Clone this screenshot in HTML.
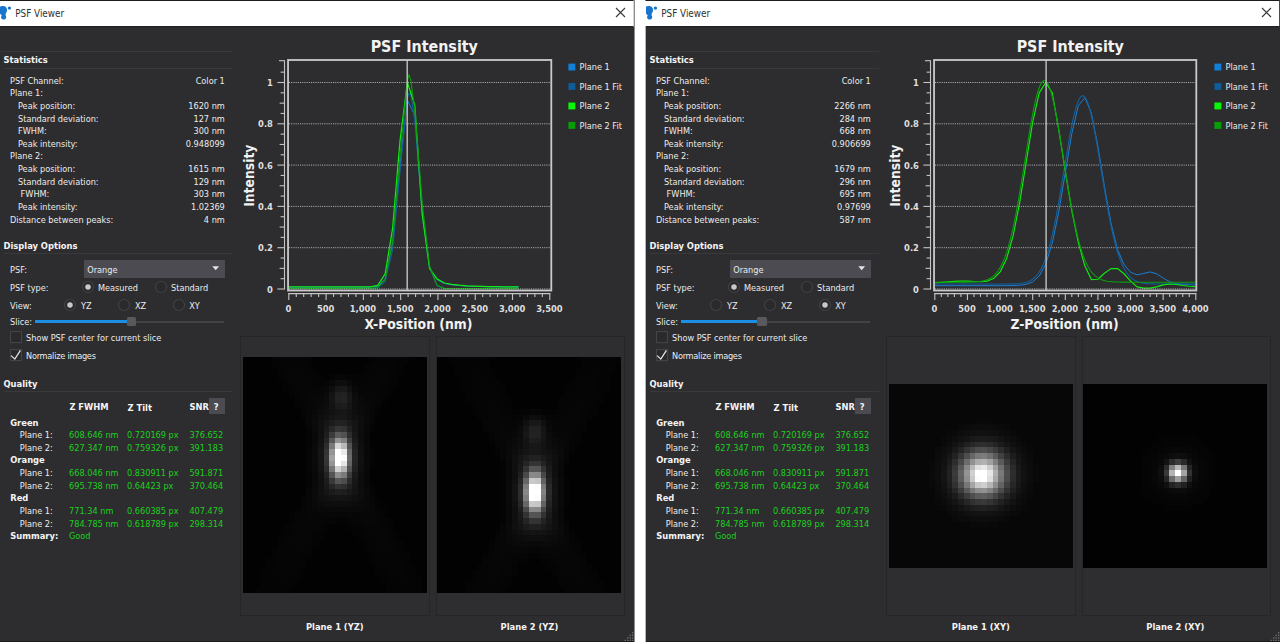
<!DOCTYPE html>
<html lang="en"><head><meta charset="utf-8"><title>PSF Viewer</title>
<style>
html,body{margin:0;padding:0}
body{width:1280px;height:642px;overflow:hidden;background:#fff;position:relative;font-family:"DejaVu Sans Condensed","Liberation Sans",sans-serif}
.win{position:absolute;top:0;height:642px;background:#2d2d30;overflow:hidden}
.win:after{content:'';position:absolute;left:0;right:0;bottom:0;height:1px;background:#1b1b1c}
.tb:after{content:'';position:absolute;left:0;right:-1px;top:26px;height:1px;background:#29292b}
.tb{position:absolute;left:0;right:0;top:0;height:26px;background:#fff;border-top:1px solid #1c1c1c;border-bottom:1px solid #222224;border-right:1px solid #7a7a7a;box-sizing:content-box;height:25px}
.title{position:absolute;left:15.2px;top:7px;font-family:"DejaVu Sans Condensed","Liberation Sans",sans-serif;font-size:9.85px;line-height:12px;color:#303030;white-space:pre}
.close{position:absolute;left:615.3px;top:6.2px}
.t{position:absolute;font-size:9.1px;line-height:12px;color:#ececec;white-space:pre}
.t.b{font-weight:700;font-size:9.3px;color:#f4f4f4}
.t.g{color:#1cd01c}
.t.c{text-align:center}
.sep{position:absolute;height:1px;background:#39393c}
.combo{position:absolute;background:#4b4b51}
.qbtn{position:absolute;background:#4b4b51}
.radio{position:absolute}
.chk{position:absolute}
.track{position:absolute;height:1.6px;background:#434346}
.fill{position:absolute;height:3px;background:#1c8fe4}
.thumb{position:absolute;width:9.3px;height:9.2px;background:#58585d;border-radius:1.5px}
.chart{position:absolute;overflow:hidden}
.panel{position:absolute;box-sizing:content-box;border:1px solid #262628;background:#2e2e31}
.psf{position:absolute}
.strip{position:absolute;top:0;width:1px;height:642px}
.wr .tb{border-right-color:#4a4a4a}
.wl .tb{border-right-color:#d4d4d4}
.grip{position:absolute;left:624px;top:631.5px}
</style></head>
<body>
<div class="strip" style="left:634px;background:#8c8c8d"></div><div class="strip" style="left:645px;background:linear-gradient(#777 0,#777 1px,#fff 1px,#fff 26px,#b4b4b5 26px)"></div>
<div class="win wl" style="left:0px;width:634px">
<div class="tb"><svg width="13" height="16" viewBox="0 0 13 16" style="position:absolute;left:0;top:4.9px"><path d="M0 0.6C1.5 -0.2 4.4 -0.3 5.8 1C7.3 2.4 7.4 5 6.2 6.8C5.7 7.5 5.4 8.4 5.6 9.2C6.6 10.4 6.3 12.4 4.9 13.2C3.5 13.9 1.7 13.4 1.2 12C0.9 11.1 1.2 10.2 1.7 9.5C1.4 8.7 0.7 8.1 0 7.8Z" fill="#1874cd"/><circle cx="9.4" cy="2.1" r="1.7" fill="#1874cd"/></svg><span class="title">PSF Viewer</span><svg class="close" width="11" height="11" viewBox="0 0 11 11"><path d="M1 1L10 10M10 1L1 10" stroke="#3a3a3a" stroke-width="1.1" fill="none"/></svg></div>
<div class="sep" style="left:1px;top:51px;width:232px"></div>
<span class="t b" style="left:3.5px;top:54px">Statistics</span>
<div class="sep" style="left:3.5px;top:67.5px;width:229px"></div>
<span class="t " style="left:10px;top:75px">PSF Channel:</span>
<span class="t " style="right:409.2px;top:75px">Color 1</span>
<span class="t " style="left:10px;top:87px">Plane 1:</span>
<span class="t " style="left:18px;top:100px">Peak position:</span>
<span class="t " style="right:409.2px;top:100px">1620 nm</span>
<span class="t " style="left:18px;top:113px">Standard deviation:</span>
<span class="t " style="right:409.2px;top:113px">127 nm</span>
<span class="t " style="left:18px;top:125px">FWHM:</span>
<span class="t " style="right:409.2px;top:125px">300 nm</span>
<span class="t " style="left:18px;top:138px">Peak intensity:</span>
<span class="t " style="right:409.2px;top:138px">0.948099</span>
<span class="t " style="left:10px;top:150px">Plane 2:</span>
<span class="t " style="left:18px;top:163px">Peak position:</span>
<span class="t " style="right:409.2px;top:163px">1615 nm</span>
<span class="t " style="left:18px;top:176px">Standard deviation:</span>
<span class="t " style="right:409.2px;top:176px">129 nm</span>
<span class="t " style="left:20.6px;top:188px">FWHM:</span>
<span class="t " style="right:409.2px;top:188px">303 nm</span>
<span class="t " style="left:18px;top:201px">Peak intensity:</span>
<span class="t " style="right:409.2px;top:201px">1.02369</span>
<span class="t " style="left:10px;top:214px">Distance between peaks:</span>
<span class="t " style="right:409.2px;top:214px">4 nm</span>
<span class="t b" style="left:3.5px;top:240px">Display Options</span>
<div class="sep" style="left:3.5px;top:252.6px;width:229px"></div>
<span class="t " style="left:10px;top:264px">PSF:</span>
<div class="combo" style="left:83.5px;top:259.5px;width:141px;height:18px"><svg width="8" height="5" viewBox="0 0 8 5" style="position:absolute;left:128.6px;top:6.8px"><path d="M0.3 0.3H7.1L3.7 4.2Z" fill="#e4e4e4"/></svg></div>
<span class="t " style="left:87.3px;top:264px">Orange</span>
<span class="t " style="left:10px;top:282px">PSF type:</span>
<svg class="radio" width="14" height="14" viewBox="0 0 14 14" style="left:81px;top:280.3px"><circle cx="7" cy="7" r="5.5" fill="#2a2a2c" stroke="#414145" stroke-width="1.2"/><circle cx="7" cy="7" r="2.75" fill="#c8c8c8"/></svg>
<span class="t " style="left:98px;top:282px">Measured</span>
<svg class="radio" width="14" height="14" viewBox="0 0 14 14" style="left:153.5px;top:280.3px"><circle cx="7" cy="7" r="5.5" fill="#2a2a2c" stroke="#414145" stroke-width="1.2"/></svg>
<span class="t " style="left:171px;top:282px">Standard</span>
<span class="t " style="left:10px;top:300px">View:</span>
<svg class="radio" width="14" height="14" viewBox="0 0 14 14" style="left:63.3px;top:297.9px"><circle cx="7" cy="7" r="5.5" fill="#2a2a2c" stroke="#414145" stroke-width="1.2"/><circle cx="7" cy="7" r="2.75" fill="#c8c8c8"/></svg>
<span class="t " style="left:80.9px;top:300px">YZ</span>
<svg class="radio" width="14" height="14" viewBox="0 0 14 14" style="left:117.4px;top:297.9px"><circle cx="7" cy="7" r="5.5" fill="#2a2a2c" stroke="#414145" stroke-width="1.2"/></svg>
<span class="t " style="left:135px;top:300px">XZ</span>
<svg class="radio" width="14" height="14" viewBox="0 0 14 14" style="left:171.6px;top:297.9px"><circle cx="7" cy="7" r="5.5" fill="#2a2a2c" stroke="#414145" stroke-width="1.2"/></svg>
<span class="t " style="left:189.2px;top:300px">XY</span>
<span class="t " style="left:10px;top:316px">Slice:</span>
<div class="track" style="left:35px;top:321px;width:189px"></div>
<div class="fill" style="left:35px;top:320px;width:92px"></div>
<div class="thumb" style="left:127px;top:317px"></div>
<svg class="chk" width="14" height="14" viewBox="0 0 14 14" style="left:9.25px;top:330.4px"><rect x="1.5" y="1.6" width="11" height="11" fill="#2a2a2c" stroke="#444448" stroke-width="1.1"/></svg>
<span class="t " style="left:26px;top:332px">Show PSF center for current slice</span>
<svg class="chk" width="14" height="14" viewBox="0 0 14 14" style="left:9.25px;top:348.3px"><rect x="1.5" y="1.6" width="11" height="11" fill="#2a2a2c" stroke="#444448" stroke-width="1.1"/><path d="M2.1 7.6L5.8 11.1L11.4 2.4" fill="none" stroke="#e2e2e2" stroke-width="1.3"/></svg>
<span class="t " style="left:26px;top:350px;letter-spacing:-0.24px">Normalize images</span>
<span class="t b" style="left:3.5px;top:378px">Quality</span>
<div class="sep" style="left:3.5px;top:391px;width:229px"></div>
<span class="t b" style="left:69.4px;top:401px">Z FWHM</span>
<span class="t b" style="left:127.5px;top:402px">Z Tilt</span>
<span class="t b" style="left:189.4px;top:401px">SNR</span>
<div class="qbtn" style="left:208.5px;top:398px;width:16px;height:16px"></div>
<span class="t b" style="left:213.8px;top:401px">?</span>
<span class="t b" style="left:10.25px;top:417px">Green</span>
<span class="t " style="left:19.75px;top:429px">Plane 1:</span>
<span class="t g" style="left:69px;top:429px">608.646 nm</span>
<span class="t g" style="left:127px;top:429px">0.720169 px</span>
<span class="t g" style="left:189.4px;top:429px">376.652</span>
<span class="t " style="left:19.75px;top:442px">Plane 2:</span>
<span class="t g" style="left:69px;top:442px">627.347 nm</span>
<span class="t g" style="left:127px;top:442px">0.759326 px</span>
<span class="t g" style="left:189.4px;top:442px">391.183</span>
<span class="t b" style="left:10.25px;top:454px">Orange</span>
<span class="t " style="left:19.75px;top:467px">Plane 1:</span>
<span class="t g" style="left:69px;top:467px">668.046 nm</span>
<span class="t g" style="left:127px;top:467px">0.830911 px</span>
<span class="t g" style="left:189.4px;top:467px">591.871</span>
<span class="t " style="left:19.75px;top:480px">Plane 2:</span>
<span class="t g" style="left:69px;top:480px">695.738 nm</span>
<span class="t g" style="left:127px;top:480px">0.64423 px</span>
<span class="t g" style="left:189.4px;top:480px">370.464</span>
<span class="t b" style="left:10.25px;top:492px">Red</span>
<span class="t " style="left:19.75px;top:505px">Plane 1:</span>
<span class="t g" style="left:69px;top:505px">771.34 nm</span>
<span class="t g" style="left:127px;top:505px">0.660385 px</span>
<span class="t g" style="left:189.4px;top:505px">407.479</span>
<span class="t " style="left:19.75px;top:518px">Plane 2:</span>
<span class="t g" style="left:69px;top:518px">784.785 nm</span>
<span class="t g" style="left:127px;top:518px">0.618789 px</span>
<span class="t g" style="left:189.4px;top:518px">298.314</span>
<span class="t b" style="left:10.25px;top:530px">Summary:</span>
<span class="t g" style="left:69px;top:530px">Good</span>
<svg class="chart" width="400" height="312" viewBox="234 24 400 312" style="left:234px;top:24px">
<g font-family="'DejaVu Sans Condensed','Liberation Sans',sans-serif" font-weight="700" fill="#f2f2f2">
<text x="424.3" y="51.5" font-size="15.9" text-anchor="middle">PSF Intensity</text>
<text x="418.5" y="328.5" font-size="13.8" text-anchor="middle">X-Position (nm)</text>
<text transform="translate(253.6 175.7) rotate(-90)" font-size="13.8" text-anchor="middle">Intensity</text>
</g>
<g stroke="#c8c8c8" stroke-width="1" stroke-dasharray="1.1 1.1" opacity="0.85">
<line x1="289" y1="247.7" x2="550.3" y2="247.7"/>
<line x1="289" y1="206.4" x2="550.3" y2="206.4"/>
<line x1="289" y1="165.1" x2="550.3" y2="165.1"/>
<line x1="289" y1="123.8" x2="550.3" y2="123.8"/>
<line x1="289" y1="82.5" x2="550.3" y2="82.5"/>
</g>
<clipPath id="c3500"><rect x="289" y="61" width="261.3" height="228.3"/></clipPath>
<g clip-path="url(#c3500)" fill="none" stroke-linejoin="round">
<polyline points="288.8,287.14 296.21,287.14 303.62,287.14 311.04,287.14 318.45,287.14 325.86,287.14 333.27,287.14 340.69,287.14 348.1,287.14 355.51,287.14 362.92,287.14 370.34,287.09 377.75,286.25 385.16,278.72 392.57,243.77 399.99,164.96 407.4,100.05 414.81,115.54 422.22,213.88 429.64,268.65 437.05,279.59 444.46,283.54 451.87,284.81 459.29,285.55 466.7,286.06 474.11,286.4 481.52,286.64 488.93,286.8 496.35,286.91 503.76,286.98 511.17,287.03 518.58,287.07" stroke="#1c7fd2" stroke-width="1.0"/>
<polyline points="288.8,288.59 296.21,288.59 303.62,288.59 311.04,288.59 318.45,288.59 325.86,288.59 333.27,288.59 340.69,288.59 348.1,288.59 355.51,288.59 362.92,288.59 370.34,288.55 377.75,287.9 385.16,281.59 392.57,249.74 399.99,171.72 407.4,98.07 408.89,93.38 410.75,94.26 414.81,120.27 422.22,207.99 429.64,267.67 437.05,285.65 444.46,288.36 451.87,288.58 459.29,288.59 466.7,288.59 474.11,288.59 481.52,288.59 488.93,288.59 496.35,288.59 503.76,288.59 511.17,288.59 518.58,288.59" stroke="#155f98" stroke-width="1.1"/>
<polyline points="288.8,286.96 296.21,286.96 303.62,286.96 311.04,286.96 318.45,286.96 325.86,286.96 333.27,286.96 340.69,286.96 348.1,286.96 355.51,286.96 362.92,286.95 370.34,286.84 377.75,285.31 385.16,273.89 392.57,228.7 399.99,140.88 407.4,82.5 414.81,105.22 422.22,214.18 429.64,268.72 437.05,278.89 444.46,283 451.87,284.39 459.29,285.21 466.7,285.76 474.11,286.14 481.52,286.4 488.93,286.58 496.35,286.7 503.76,286.78 511.17,286.84 518.58,286.87" stroke="#10ea10" stroke-width="1.25"/>
<polyline points="288.8,288.59 296.21,288.59 303.62,288.59 311.04,288.59 318.45,288.59 325.86,288.59 333.27,288.59 340.69,288.59 348.1,288.59 355.51,288.59 362.92,288.59 370.34,288.53 377.75,287.59 385.16,279.35 392.57,241.4 399.99,155.4 407.4,81 408.89,74.65 410.75,79.82 414.81,109.9 422.22,203.65 429.64,266.29 437.05,285.35 444.46,288.33 451.87,288.58 459.29,288.59 466.7,288.59 474.11,288.59 481.52,288.59 488.93,288.59 496.35,288.59 503.76,288.59 511.17,288.59 518.58,288.59" stroke="#0c9c0c" stroke-width="1.1"/>
</g>
<line x1="407.2" y1="60" x2="407.2" y2="290" stroke="#c4c4c4" stroke-width="1.4"/>
<line x1="289" y1="288.9" x2="550.3" y2="288.9" stroke="#c8c8c8" stroke-width="1" stroke-dasharray="1.1 1.1" opacity="0.8"/>
<rect x="288.05" y="60" width="263.25" height="230.5" fill="none" stroke="#cacaca" stroke-width="1.8"/>
<g stroke="#c4c4c4" stroke-width="1.1">
<line x1="284.5" y1="60.3" x2="284.5" y2="289.5"/>
<line x1="279" y1="60.7" x2="284.5" y2="60.7"/>
<line x1="277.4" y1="289" x2="284.5" y2="289"/>
<line x1="280.6" y1="278.68" x2="284.5" y2="278.68"/>
<line x1="279.6" y1="268.35" x2="284.5" y2="268.35"/>
<line x1="280.6" y1="258.02" x2="284.5" y2="258.02"/>
<line x1="277.4" y1="247.7" x2="284.5" y2="247.7"/>
<line x1="280.6" y1="237.38" x2="284.5" y2="237.38"/>
<line x1="279.6" y1="227.05" x2="284.5" y2="227.05"/>
<line x1="280.6" y1="216.72" x2="284.5" y2="216.72"/>
<line x1="277.4" y1="206.4" x2="284.5" y2="206.4"/>
<line x1="280.6" y1="196.07" x2="284.5" y2="196.07"/>
<line x1="279.6" y1="185.75" x2="284.5" y2="185.75"/>
<line x1="280.6" y1="175.43" x2="284.5" y2="175.43"/>
<line x1="277.4" y1="165.1" x2="284.5" y2="165.1"/>
<line x1="280.6" y1="154.78" x2="284.5" y2="154.78"/>
<line x1="279.6" y1="144.45" x2="284.5" y2="144.45"/>
<line x1="280.6" y1="134.12" x2="284.5" y2="134.12"/>
<line x1="277.4" y1="123.8" x2="284.5" y2="123.8"/>
<line x1="280.6" y1="113.47" x2="284.5" y2="113.47"/>
<line x1="279.6" y1="103.15" x2="284.5" y2="103.15"/>
<line x1="280.6" y1="92.82" x2="284.5" y2="92.82"/>
<line x1="277.4" y1="82.5" x2="284.5" y2="82.5"/>
<line x1="280.6" y1="72.17" x2="284.5" y2="72.17"/>
<line x1="288.2" y1="293.6" x2="550.4" y2="293.6"/>
<line x1="288.8" y1="293.2" x2="288.8" y2="300"/>
<line x1="296.26" y1="293.2" x2="296.26" y2="296.9"/>
<line x1="303.71" y1="293.2" x2="303.71" y2="296.9"/>
<line x1="311.17" y1="293.2" x2="311.17" y2="296.9"/>
<line x1="318.63" y1="293.2" x2="318.63" y2="296.9"/>
<line x1="326.09" y1="293.2" x2="326.09" y2="300"/>
<line x1="333.54" y1="293.2" x2="333.54" y2="296.9"/>
<line x1="341" y1="293.2" x2="341" y2="296.9"/>
<line x1="348.46" y1="293.2" x2="348.46" y2="296.9"/>
<line x1="355.91" y1="293.2" x2="355.91" y2="296.9"/>
<line x1="363.37" y1="293.2" x2="363.37" y2="300"/>
<line x1="370.83" y1="293.2" x2="370.83" y2="296.9"/>
<line x1="378.29" y1="293.2" x2="378.29" y2="296.9"/>
<line x1="385.74" y1="293.2" x2="385.74" y2="296.9"/>
<line x1="393.2" y1="293.2" x2="393.2" y2="296.9"/>
<line x1="400.66" y1="293.2" x2="400.66" y2="300"/>
<line x1="408.11" y1="293.2" x2="408.11" y2="296.9"/>
<line x1="415.57" y1="293.2" x2="415.57" y2="296.9"/>
<line x1="423.03" y1="293.2" x2="423.03" y2="296.9"/>
<line x1="430.49" y1="293.2" x2="430.49" y2="296.9"/>
<line x1="437.94" y1="293.2" x2="437.94" y2="300"/>
<line x1="445.4" y1="293.2" x2="445.4" y2="296.9"/>
<line x1="452.86" y1="293.2" x2="452.86" y2="296.9"/>
<line x1="460.31" y1="293.2" x2="460.31" y2="296.9"/>
<line x1="467.77" y1="293.2" x2="467.77" y2="296.9"/>
<line x1="475.23" y1="293.2" x2="475.23" y2="300"/>
<line x1="482.69" y1="293.2" x2="482.69" y2="296.9"/>
<line x1="490.14" y1="293.2" x2="490.14" y2="296.9"/>
<line x1="497.6" y1="293.2" x2="497.6" y2="296.9"/>
<line x1="505.06" y1="293.2" x2="505.06" y2="296.9"/>
<line x1="512.51" y1="293.2" x2="512.51" y2="300"/>
<line x1="519.97" y1="293.2" x2="519.97" y2="296.9"/>
<line x1="527.43" y1="293.2" x2="527.43" y2="296.9"/>
<line x1="534.89" y1="293.2" x2="534.89" y2="296.9"/>
<line x1="542.34" y1="293.2" x2="542.34" y2="296.9"/>
<line x1="549.8" y1="293.2" x2="549.8" y2="300"/>
</g>
<g font-family="'DejaVu Sans Condensed','Liberation Sans',sans-serif" font-weight="700" font-size="9.3" fill="#dedede">
<text x="272.9" y="292.5" text-anchor="end">0</text>
<text x="272.9" y="251.2" text-anchor="end">0.2</text>
<text x="272.9" y="209.9" text-anchor="end">0.4</text>
<text x="272.9" y="168.6" text-anchor="end">0.6</text>
<text x="272.9" y="127.3" text-anchor="end">0.8</text>
<text x="272.9" y="86" text-anchor="end">1</text>
<text x="288.4" y="312.3" text-anchor="middle">0</text>
<text x="325.69" y="312.3" text-anchor="middle">500</text>
<text x="362.97" y="312.3" text-anchor="middle">1,000</text>
<text x="400.26" y="312.3" text-anchor="middle">1,500</text>
<text x="437.54" y="312.3" text-anchor="middle">2,000</text>
<text x="474.83" y="312.3" text-anchor="middle">2,500</text>
<text x="512.11" y="312.3" text-anchor="middle">3,000</text>
<text x="549.4" y="312.3" text-anchor="middle">3,500</text>
</g>
<g font-family="'DejaVu Sans Condensed','Liberation Sans',sans-serif" font-size="9.1" fill="#ececec">
<rect x="568.4" y="63.6" width="6.9" height="6.9" fill="#1080d8"/><text x="579.5" y="70.3">Plane 1</text>
<rect x="568.4" y="83.05" width="6.9" height="6.9" fill="#0e5c98"/><text x="579.5" y="89.75">Plane 1 Fit</text>
<rect x="568.4" y="102.5" width="6.9" height="6.9" fill="#06f806"/><text x="579.5" y="109.2">Plane 2</text>
<rect x="568.4" y="121.95" width="6.9" height="6.9" fill="#06a006"/><text x="579.5" y="128.65">Plane 2 Fit</text>
</g>
</svg>
<div class="panel" style="left:240.3px;top:336.3px;width:188.2px;height:277.7px"></div>
<div class="panel" style="left:435.6px;top:336.3px;width:187px;height:277.7px"></div>
<svg class="psf" width="184" height="235.75" viewBox="0 0 32 41" preserveAspectRatio="none" shape-rendering="crispEdges" style="left:243px;top:357.1px"><rect width="32" height="41" fill="#020202"/><rect x="5" y="0" width="1" height="1" fill="#040404"/><rect x="6" y="0" width="5" height="1" fill="#050505"/><rect x="11" y="0" width="1" height="1" fill="#040404"/><rect x="22" y="0" width="1" height="1" fill="#040404"/><rect x="23" y="0" width="4" height="1" fill="#050505"/><rect x="27" y="0" width="2" height="1" fill="#040404"/><rect x="5" y="1" width="2" height="1" fill="#040404"/><rect x="7" y="1" width="4" height="1" fill="#050505"/><rect x="11" y="1" width="1" height="1" fill="#040404"/><rect x="21" y="1" width="1" height="1" fill="#040404"/><rect x="22" y="1" width="5" height="1" fill="#050505"/><rect x="27" y="1" width="1" height="1" fill="#040404"/><rect x="6" y="2" width="1" height="1" fill="#040404"/><rect x="7" y="2" width="2" height="1" fill="#050505"/><rect x="9" y="2" width="1" height="1" fill="#060606"/><rect x="10" y="2" width="2" height="1" fill="#050505"/><rect x="12" y="2" width="1" height="1" fill="#040404"/><rect x="21" y="2" width="1" height="1" fill="#040404"/><rect x="22" y="2" width="2" height="1" fill="#050505"/><rect x="24" y="2" width="1" height="1" fill="#060606"/><rect x="25" y="2" width="2" height="1" fill="#050505"/><rect x="27" y="2" width="1" height="1" fill="#040404"/><rect x="6" y="3" width="1" height="1" fill="#040404"/><rect x="7" y="3" width="2" height="1" fill="#050505"/><rect x="9" y="3" width="2" height="1" fill="#060606"/><rect x="11" y="3" width="1" height="1" fill="#050505"/><rect x="12" y="3" width="2" height="1" fill="#040404"/><rect x="15" y="3" width="1" height="1" fill="#040404"/><rect x="16" y="3" width="2" height="1" fill="#060606"/><rect x="18" y="3" width="1" height="1" fill="#050505"/><rect x="19" y="3" width="2" height="1" fill="#040404"/><rect x="21" y="3" width="2" height="1" fill="#050505"/><rect x="23" y="3" width="2" height="1" fill="#060606"/><rect x="25" y="3" width="1" height="1" fill="#050505"/><rect x="26" y="3" width="1" height="1" fill="#040404"/><rect x="7" y="4" width="1" height="1" fill="#040404"/><rect x="8" y="4" width="1" height="1" fill="#050505"/><rect x="9" y="4" width="3" height="1" fill="#060606"/><rect x="12" y="4" width="1" height="1" fill="#050505"/><rect x="13" y="4" width="1" height="1" fill="#040404"/><rect x="14" y="4" width="1" height="1" fill="#050505"/><rect x="15" y="4" width="1" height="1" fill="#080808"/><rect x="16" y="4" width="1" height="1" fill="#0d0d0d"/><rect x="17" y="4" width="1" height="1" fill="#0e0e0e"/><rect x="18" y="4" width="1" height="1" fill="#0a0a0a"/><rect x="19" y="4" width="1" height="1" fill="#060606"/><rect x="20" y="4" width="2" height="1" fill="#050505"/><rect x="22" y="4" width="3" height="1" fill="#060606"/><rect x="25" y="4" width="1" height="1" fill="#050505"/><rect x="26" y="4" width="1" height="1" fill="#040404"/><rect x="7" y="5" width="1" height="1" fill="#040404"/><rect x="8" y="5" width="1" height="1" fill="#050505"/><rect x="9" y="5" width="5" height="1" fill="#060606"/><rect x="14" y="5" width="1" height="1" fill="#070707"/><rect x="15" y="5" width="1" height="1" fill="#0e0e0e"/><rect x="16" y="5" width="1" height="1" fill="#181818"/><rect x="17" y="5" width="1" height="1" fill="#191919"/><rect x="18" y="5" width="1" height="1" fill="#111111"/><rect x="19" y="5" width="1" height="1" fill="#090909"/><rect x="20" y="5" width="4" height="1" fill="#060606"/><rect x="24" y="5" width="1" height="1" fill="#050505"/><rect x="25" y="5" width="1" height="1" fill="#040404"/><rect x="8" y="6" width="1" height="1" fill="#040404"/><rect x="9" y="6" width="1" height="1" fill="#050505"/><rect x="10" y="6" width="1" height="1" fill="#060606"/><rect x="11" y="6" width="3" height="1" fill="#070707"/><rect x="14" y="6" width="1" height="1" fill="#0a0a0a"/><rect x="15" y="6" width="1" height="1" fill="#141414"/><rect x="16" y="6" width="1" height="1" fill="#202020"/><rect x="17" y="6" width="1" height="1" fill="#222222"/><rect x="18" y="6" width="1" height="1" fill="#171717"/><rect x="19" y="6" width="1" height="1" fill="#0b0b0b"/><rect x="20" y="6" width="3" height="1" fill="#070707"/><rect x="23" y="6" width="1" height="1" fill="#060606"/><rect x="24" y="6" width="1" height="1" fill="#050505"/><rect x="25" y="6" width="1" height="1" fill="#040404"/><rect x="9" y="7" width="1" height="1" fill="#050505"/><rect x="10" y="7" width="1" height="1" fill="#060606"/><rect x="11" y="7" width="1" height="1" fill="#070707"/><rect x="12" y="7" width="2" height="1" fill="#080808"/><rect x="14" y="7" width="1" height="1" fill="#0b0b0b"/><rect x="15" y="7" width="1" height="1" fill="#151515"/><rect x="16" y="7" width="1" height="1" fill="#212121"/><rect x="17" y="7" width="1" height="1" fill="#232323"/><rect x="18" y="7" width="1" height="1" fill="#181818"/><rect x="19" y="7" width="1" height="1" fill="#0d0d0d"/><rect x="20" y="7" width="1" height="1" fill="#090909"/><rect x="21" y="7" width="2" height="1" fill="#070707"/><rect x="23" y="7" width="1" height="1" fill="#060606"/><rect x="24" y="7" width="1" height="1" fill="#040404"/><rect x="9" y="8" width="1" height="1" fill="#040404"/><rect x="10" y="8" width="1" height="1" fill="#060606"/><rect x="11" y="8" width="1" height="1" fill="#070707"/><rect x="12" y="8" width="1" height="1" fill="#080808"/><rect x="13" y="8" width="1" height="1" fill="#0a0a0a"/><rect x="14" y="8" width="1" height="1" fill="#0c0c0c"/><rect x="15" y="8" width="1" height="1" fill="#131313"/><rect x="16" y="8" width="1" height="1" fill="#1b1b1b"/><rect x="17" y="8" width="1" height="1" fill="#1d1d1d"/><rect x="18" y="8" width="1" height="1" fill="#151515"/><rect x="19" y="8" width="1" height="1" fill="#0d0d0d"/><rect x="20" y="8" width="1" height="1" fill="#0a0a0a"/><rect x="21" y="8" width="1" height="1" fill="#080808"/><rect x="22" y="8" width="1" height="1" fill="#070707"/><rect x="23" y="8" width="1" height="1" fill="#050505"/><rect x="10" y="9" width="1" height="1" fill="#050505"/><rect x="11" y="9" width="1" height="1" fill="#070707"/><rect x="12" y="9" width="1" height="1" fill="#090909"/><rect x="13" y="9" width="1" height="1" fill="#0c0c0c"/><rect x="14" y="9" width="1" height="1" fill="#0e0e0e"/><rect x="15" y="9" width="1" height="1" fill="#121212"/><rect x="16" y="9" width="1" height="1" fill="#161616"/><rect x="17" y="9" width="1" height="1" fill="#171717"/><rect x="18" y="9" width="1" height="1" fill="#131313"/><rect x="19" y="9" width="1" height="1" fill="#0e0e0e"/><rect x="20" y="9" width="1" height="1" fill="#0b0b0b"/><rect x="21" y="9" width="1" height="1" fill="#090909"/><rect x="22" y="9" width="1" height="1" fill="#060606"/><rect x="23" y="9" width="1" height="1" fill="#040404"/><rect x="10" y="10" width="1" height="1" fill="#040404"/><rect x="11" y="10" width="1" height="1" fill="#070707"/><rect x="12" y="10" width="1" height="1" fill="#0a0a0a"/><rect x="13" y="10" width="1" height="1" fill="#0e0e0e"/><rect x="14" y="10" width="1" height="1" fill="#111111"/><rect x="15" y="10" width="1" height="1" fill="#151515"/><rect x="16" y="10" width="2" height="1" fill="#181818"/><rect x="18" y="10" width="1" height="1" fill="#141414"/><rect x="19" y="10" width="1" height="1" fill="#101010"/><rect x="20" y="10" width="1" height="1" fill="#0d0d0d"/><rect x="21" y="10" width="1" height="1" fill="#090909"/><rect x="22" y="10" width="1" height="1" fill="#060606"/><rect x="11" y="11" width="1" height="1" fill="#070707"/><rect x="12" y="11" width="1" height="1" fill="#0b0b0b"/><rect x="13" y="11" width="1" height="1" fill="#101010"/><rect x="14" y="11" width="1" height="1" fill="#161616"/><rect x="15" y="11" width="1" height="1" fill="#1c1c1c"/><rect x="16" y="11" width="1" height="1" fill="#222222"/><rect x="17" y="11" width="1" height="1" fill="#212121"/><rect x="18" y="11" width="1" height="1" fill="#1a1a1a"/><rect x="19" y="11" width="1" height="1" fill="#141414"/><rect x="20" y="11" width="1" height="1" fill="#0e0e0e"/><rect x="21" y="11" width="1" height="1" fill="#090909"/><rect x="22" y="11" width="1" height="1" fill="#050505"/><rect x="11" y="12" width="1" height="1" fill="#050505"/><rect x="12" y="12" width="1" height="1" fill="#0a0a0a"/><rect x="13" y="12" width="1" height="1" fill="#101010"/><rect x="14" y="12" width="1" height="1" fill="#191919"/><rect x="15" y="12" width="1" height="1" fill="#282828"/><rect x="16" y="12" width="1" height="1" fill="#363636"/><rect x="17" y="12" width="1" height="1" fill="#323232"/><rect x="18" y="12" width="1" height="1" fill="#212121"/><rect x="19" y="12" width="1" height="1" fill="#151515"/><rect x="20" y="12" width="1" height="1" fill="#0d0d0d"/><rect x="21" y="12" width="1" height="1" fill="#080808"/><rect x="22" y="12" width="1" height="1" fill="#040404"/><rect x="11" y="13" width="1" height="1" fill="#040404"/><rect x="12" y="13" width="1" height="1" fill="#090909"/><rect x="13" y="13" width="1" height="1" fill="#101010"/><rect x="14" y="13" width="1" height="1" fill="#1e1e1e"/><rect x="15" y="13" width="1" height="1" fill="#3b3b3b"/><rect x="16" y="13" width="1" height="1" fill="#5b5b5b"/><rect x="17" y="13" width="1" height="1" fill="#515151"/><rect x="18" y="13" width="1" height="1" fill="#2d2d2d"/><rect x="19" y="13" width="1" height="1" fill="#171717"/><rect x="20" y="13" width="1" height="1" fill="#0d0d0d"/><rect x="21" y="13" width="1" height="1" fill="#070707"/><rect x="11" y="14" width="1" height="1" fill="#040404"/><rect x="12" y="14" width="1" height="1" fill="#090909"/><rect x="13" y="14" width="1" height="1" fill="#111111"/><rect x="14" y="14" width="1" height="1" fill="#242424"/><rect x="15" y="14" width="1" height="1" fill="#575757"/><rect x="16" y="14" width="1" height="1" fill="#939393"/><rect x="17" y="14" width="1" height="1" fill="#808080"/><rect x="18" y="14" width="1" height="1" fill="#3e3e3e"/><rect x="19" y="14" width="1" height="1" fill="#1a1a1a"/><rect x="20" y="14" width="1" height="1" fill="#0d0d0d"/><rect x="21" y="14" width="1" height="1" fill="#070707"/><rect x="11" y="15" width="1" height="1" fill="#050505"/><rect x="12" y="15" width="1" height="1" fill="#0a0a0a"/><rect x="13" y="15" width="1" height="1" fill="#141414"/><rect x="14" y="15" width="1" height="1" fill="#2d2d2d"/><rect x="15" y="15" width="1" height="1" fill="#797979"/><rect x="16" y="15" width="1" height="1" fill="#d7d7d7"/><rect x="17" y="15" width="1" height="1" fill="#b9b9b9"/><rect x="18" y="15" width="1" height="1" fill="#535353"/><rect x="19" y="15" width="1" height="1" fill="#1f1f1f"/><rect x="20" y="15" width="1" height="1" fill="#0f0f0f"/><rect x="21" y="15" width="1" height="1" fill="#080808"/><rect x="11" y="16" width="1" height="1" fill="#050505"/><rect x="12" y="16" width="1" height="1" fill="#0b0b0b"/><rect x="13" y="16" width="1" height="1" fill="#161616"/><rect x="14" y="16" width="1" height="1" fill="#343434"/><rect x="15" y="16" width="1" height="1" fill="#969696"/><rect x="16" y="16" width="1" height="1" fill="#ffffff"/><rect x="17" y="16" width="1" height="1" fill="#e9e9e9"/><rect x="18" y="16" width="1" height="1" fill="#656565"/><rect x="19" y="16" width="1" height="1" fill="#232323"/><rect x="20" y="16" width="1" height="1" fill="#101010"/><rect x="21" y="16" width="1" height="1" fill="#080808"/><rect x="22" y="16" width="1" height="1" fill="#040404"/><rect x="11" y="17" width="1" height="1" fill="#050505"/><rect x="12" y="17" width="1" height="1" fill="#0b0b0b"/><rect x="13" y="17" width="1" height="1" fill="#161616"/><rect x="14" y="17" width="1" height="1" fill="#373737"/><rect x="15" y="17" width="1" height="1" fill="#a1a1a1"/><rect x="16" y="17" width="1" height="1" fill="#ffffff"/><rect x="17" y="17" width="1" height="1" fill="#fbfbfb"/><rect x="18" y="17" width="1" height="1" fill="#6b6b6b"/><rect x="19" y="17" width="1" height="1" fill="#242424"/><rect x="20" y="17" width="1" height="1" fill="#111111"/><rect x="21" y="17" width="1" height="1" fill="#080808"/><rect x="22" y="17" width="1" height="1" fill="#040404"/><rect x="11" y="18" width="1" height="1" fill="#050505"/><rect x="12" y="18" width="1" height="1" fill="#0b0b0b"/><rect x="13" y="18" width="1" height="1" fill="#151515"/><rect x="14" y="18" width="1" height="1" fill="#343434"/><rect x="15" y="18" width="1" height="1" fill="#949494"/><rect x="16" y="18" width="1" height="1" fill="#ffffff"/><rect x="17" y="18" width="1" height="1" fill="#e5e5e5"/><rect x="18" y="18" width="1" height="1" fill="#636363"/><rect x="19" y="18" width="1" height="1" fill="#232323"/><rect x="20" y="18" width="1" height="1" fill="#101010"/><rect x="21" y="18" width="1" height="1" fill="#080808"/><rect x="22" y="18" width="1" height="1" fill="#040404"/><rect x="11" y="19" width="1" height="1" fill="#050505"/><rect x="12" y="19" width="1" height="1" fill="#0a0a0a"/><rect x="13" y="19" width="1" height="1" fill="#141414"/><rect x="14" y="19" width="1" height="1" fill="#2c2c2c"/><rect x="15" y="19" width="1" height="1" fill="#767676"/><rect x="16" y="19" width="1" height="1" fill="#d0d0d0"/><rect x="17" y="19" width="1" height="1" fill="#b3b3b3"/><rect x="18" y="19" width="1" height="1" fill="#515151"/><rect x="19" y="19" width="1" height="1" fill="#1f1f1f"/><rect x="20" y="19" width="1" height="1" fill="#0f0f0f"/><rect x="21" y="19" width="1" height="1" fill="#080808"/><rect x="11" y="20" width="1" height="1" fill="#040404"/><rect x="12" y="20" width="1" height="1" fill="#090909"/><rect x="13" y="20" width="1" height="1" fill="#111111"/><rect x="14" y="20" width="1" height="1" fill="#232323"/><rect x="15" y="20" width="1" height="1" fill="#535353"/><rect x="16" y="20" width="1" height="1" fill="#8c8c8c"/><rect x="17" y="20" width="1" height="1" fill="#7a7a7a"/><rect x="18" y="20" width="1" height="1" fill="#3c3c3c"/><rect x="19" y="20" width="1" height="1" fill="#1a1a1a"/><rect x="20" y="20" width="1" height="1" fill="#0d0d0d"/><rect x="21" y="20" width="1" height="1" fill="#070707"/><rect x="11" y="21" width="1" height="1" fill="#040404"/><rect x="12" y="21" width="1" height="1" fill="#090909"/><rect x="13" y="21" width="1" height="1" fill="#101010"/><rect x="14" y="21" width="1" height="1" fill="#1d1d1d"/><rect x="15" y="21" width="1" height="1" fill="#383838"/><rect x="16" y="21" width="1" height="1" fill="#565656"/><rect x="17" y="21" width="1" height="1" fill="#4d4d4d"/><rect x="18" y="21" width="1" height="1" fill="#2b2b2b"/><rect x="19" y="21" width="1" height="1" fill="#171717"/><rect x="20" y="21" width="1" height="1" fill="#0d0d0d"/><rect x="21" y="21" width="1" height="1" fill="#070707"/><rect x="11" y="22" width="1" height="1" fill="#050505"/><rect x="12" y="22" width="1" height="1" fill="#0a0a0a"/><rect x="13" y="22" width="1" height="1" fill="#101010"/><rect x="14" y="22" width="1" height="1" fill="#191919"/><rect x="15" y="22" width="1" height="1" fill="#262626"/><rect x="16" y="22" width="1" height="1" fill="#333333"/><rect x="17" y="22" width="1" height="1" fill="#2f2f2f"/><rect x="18" y="22" width="1" height="1" fill="#202020"/><rect x="19" y="22" width="1" height="1" fill="#151515"/><rect x="20" y="22" width="1" height="1" fill="#0d0d0d"/><rect x="21" y="22" width="1" height="1" fill="#080808"/><rect x="22" y="22" width="1" height="1" fill="#040404"/><rect x="11" y="23" width="1" height="1" fill="#070707"/><rect x="12" y="23" width="1" height="1" fill="#0b0b0b"/><rect x="13" y="23" width="1" height="1" fill="#101010"/><rect x="14" y="23" width="1" height="1" fill="#151515"/><rect x="15" y="23" width="1" height="1" fill="#1b1b1b"/><rect x="16" y="23" width="1" height="1" fill="#202020"/><rect x="17" y="23" width="1" height="1" fill="#1e1e1e"/><rect x="18" y="23" width="1" height="1" fill="#191919"/><rect x="19" y="23" width="1" height="1" fill="#131313"/><rect x="20" y="23" width="1" height="1" fill="#0e0e0e"/><rect x="21" y="23" width="1" height="1" fill="#090909"/><rect x="22" y="23" width="1" height="1" fill="#050505"/><rect x="10" y="24" width="1" height="1" fill="#040404"/><rect x="11" y="24" width="1" height="1" fill="#070707"/><rect x="12" y="24" width="1" height="1" fill="#0a0a0a"/><rect x="13" y="24" width="1" height="1" fill="#0e0e0e"/><rect x="14" y="24" width="1" height="1" fill="#101010"/><rect x="15" y="24" width="1" height="1" fill="#131313"/><rect x="16" y="24" width="2" height="1" fill="#141414"/><rect x="18" y="24" width="1" height="1" fill="#121212"/><rect x="19" y="24" width="1" height="1" fill="#0f0f0f"/><rect x="20" y="24" width="1" height="1" fill="#0c0c0c"/><rect x="21" y="24" width="1" height="1" fill="#090909"/><rect x="22" y="24" width="1" height="1" fill="#060606"/><rect x="10" y="25" width="1" height="1" fill="#050505"/><rect x="11" y="25" width="1" height="1" fill="#070707"/><rect x="12" y="25" width="1" height="1" fill="#090909"/><rect x="13" y="25" width="1" height="1" fill="#0b0b0b"/><rect x="14" y="25" width="3" height="1" fill="#0d0d0d"/><rect x="17" y="25" width="1" height="1" fill="#0e0e0e"/><rect x="18" y="25" width="1" height="1" fill="#0d0d0d"/><rect x="19" y="25" width="1" height="1" fill="#0c0c0c"/><rect x="20" y="25" width="1" height="1" fill="#0a0a0a"/><rect x="21" y="25" width="1" height="1" fill="#090909"/><rect x="22" y="25" width="1" height="1" fill="#060606"/><rect x="23" y="25" width="1" height="1" fill="#040404"/><rect x="9" y="26" width="1" height="1" fill="#040404"/><rect x="10" y="26" width="1" height="1" fill="#060606"/><rect x="11" y="26" width="1" height="1" fill="#070707"/><rect x="12" y="26" width="1" height="1" fill="#080808"/><rect x="13" y="26" width="2" height="1" fill="#090909"/><rect x="15" y="26" width="1" height="1" fill="#0a0a0a"/><rect x="16" y="26" width="2" height="1" fill="#090909"/><rect x="18" y="26" width="1" height="1" fill="#0a0a0a"/><rect x="19" y="26" width="2" height="1" fill="#090909"/><rect x="21" y="26" width="1" height="1" fill="#080808"/><rect x="22" y="26" width="1" height="1" fill="#070707"/><rect x="23" y="26" width="1" height="1" fill="#050505"/><rect x="24" y="26" width="1" height="1" fill="#040404"/><rect x="8" y="27" width="1" height="1" fill="#040404"/><rect x="9" y="27" width="1" height="1" fill="#050505"/><rect x="10" y="27" width="1" height="1" fill="#060606"/><rect x="11" y="27" width="5" height="1" fill="#070707"/><rect x="16" y="27" width="2" height="1" fill="#060606"/><rect x="18" y="27" width="5" height="1" fill="#070707"/><rect x="23" y="27" width="1" height="1" fill="#060606"/><rect x="24" y="27" width="1" height="1" fill="#040404"/><rect x="8" y="28" width="1" height="1" fill="#040404"/><rect x="9" y="28" width="1" height="1" fill="#050505"/><rect x="10" y="28" width="1" height="1" fill="#060606"/><rect x="11" y="28" width="1" height="1" fill="#070707"/><rect x="12" y="28" width="2" height="1" fill="#060606"/><rect x="14" y="28" width="2" height="1" fill="#050505"/><rect x="16" y="28" width="2" height="1" fill="#040404"/><rect x="18" y="28" width="1" height="1" fill="#050505"/><rect x="19" y="28" width="2" height="1" fill="#060606"/><rect x="21" y="28" width="2" height="1" fill="#070707"/><rect x="23" y="28" width="1" height="1" fill="#060606"/><rect x="24" y="28" width="1" height="1" fill="#050505"/><rect x="25" y="28" width="1" height="1" fill="#040404"/><rect x="7" y="29" width="1" height="1" fill="#040404"/><rect x="8" y="29" width="1" height="1" fill="#050505"/><rect x="9" y="29" width="4" height="1" fill="#060606"/><rect x="13" y="29" width="1" height="1" fill="#050505"/><rect x="14" y="29" width="1" height="1" fill="#040404"/><rect x="18" y="29" width="2" height="1" fill="#040404"/><rect x="20" y="29" width="1" height="1" fill="#050505"/><rect x="21" y="29" width="3" height="1" fill="#060606"/><rect x="24" y="29" width="1" height="1" fill="#050505"/><rect x="25" y="29" width="1" height="1" fill="#040404"/><rect x="7" y="30" width="1" height="1" fill="#040404"/><rect x="8" y="30" width="1" height="1" fill="#050505"/><rect x="9" y="30" width="3" height="1" fill="#060606"/><rect x="12" y="30" width="1" height="1" fill="#050505"/><rect x="13" y="30" width="1" height="1" fill="#040404"/><rect x="19" y="30" width="2" height="1" fill="#040404"/><rect x="21" y="30" width="1" height="1" fill="#050505"/><rect x="22" y="30" width="3" height="1" fill="#060606"/><rect x="25" y="30" width="1" height="1" fill="#050505"/><rect x="26" y="30" width="1" height="1" fill="#040404"/><rect x="6" y="31" width="1" height="1" fill="#040404"/><rect x="7" y="31" width="2" height="1" fill="#050505"/><rect x="9" y="31" width="2" height="1" fill="#060606"/><rect x="11" y="31" width="1" height="1" fill="#050505"/><rect x="12" y="31" width="2" height="1" fill="#040404"/><rect x="20" y="31" width="1" height="1" fill="#040404"/><rect x="21" y="31" width="2" height="1" fill="#050505"/><rect x="23" y="31" width="2" height="1" fill="#060606"/><rect x="25" y="31" width="1" height="1" fill="#050505"/><rect x="26" y="31" width="1" height="1" fill="#040404"/><rect x="6" y="32" width="1" height="1" fill="#040404"/><rect x="7" y="32" width="2" height="1" fill="#050505"/><rect x="9" y="32" width="1" height="1" fill="#060606"/><rect x="10" y="32" width="2" height="1" fill="#050505"/><rect x="12" y="32" width="1" height="1" fill="#040404"/><rect x="21" y="32" width="1" height="1" fill="#040404"/><rect x="22" y="32" width="2" height="1" fill="#050505"/><rect x="24" y="32" width="1" height="1" fill="#060606"/><rect x="25" y="32" width="2" height="1" fill="#050505"/><rect x="27" y="32" width="1" height="1" fill="#040404"/><rect x="5" y="33" width="1" height="1" fill="#040404"/><rect x="6" y="33" width="5" height="1" fill="#050505"/><rect x="11" y="33" width="1" height="1" fill="#040404"/><rect x="21" y="33" width="2" height="1" fill="#040404"/><rect x="23" y="33" width="4" height="1" fill="#050505"/><rect x="27" y="33" width="1" height="1" fill="#040404"/><rect x="5" y="34" width="1" height="1" fill="#040404"/><rect x="6" y="34" width="4" height="1" fill="#050505"/><rect x="10" y="34" width="2" height="1" fill="#040404"/><rect x="22" y="34" width="1" height="1" fill="#040404"/><rect x="23" y="34" width="4" height="1" fill="#050505"/><rect x="27" y="34" width="2" height="1" fill="#040404"/><rect x="4" y="35" width="2" height="1" fill="#040404"/><rect x="6" y="35" width="4" height="1" fill="#050505"/><rect x="10" y="35" width="1" height="1" fill="#040404"/><rect x="22" y="35" width="2" height="1" fill="#040404"/><rect x="24" y="35" width="4" height="1" fill="#050505"/><rect x="28" y="35" width="1" height="1" fill="#040404"/><rect x="4" y="36" width="2" height="1" fill="#040404"/><rect x="6" y="36" width="3" height="1" fill="#050505"/><rect x="9" y="36" width="2" height="1" fill="#040404"/><rect x="23" y="36" width="2" height="1" fill="#040404"/><rect x="25" y="36" width="3" height="1" fill="#050505"/><rect x="28" y="36" width="2" height="1" fill="#040404"/><rect x="3" y="37" width="2" height="1" fill="#040404"/><rect x="5" y="37" width="3" height="1" fill="#050505"/><rect x="8" y="37" width="2" height="1" fill="#040404"/><rect x="23" y="37" width="2" height="1" fill="#040404"/><rect x="25" y="37" width="3" height="1" fill="#050505"/><rect x="28" y="37" width="2" height="1" fill="#040404"/><rect x="3" y="38" width="3" height="1" fill="#040404"/><rect x="6" y="38" width="1" height="1" fill="#050505"/><rect x="7" y="38" width="3" height="1" fill="#040404"/><rect x="24" y="38" width="3" height="1" fill="#040404"/><rect x="27" y="38" width="1" height="1" fill="#050505"/><rect x="28" y="38" width="3" height="1" fill="#040404"/><rect x="3" y="39" width="6" height="1" fill="#040404"/><rect x="25" y="39" width="6" height="1" fill="#040404"/><rect x="2" y="40" width="6" height="1" fill="#040404"/><rect x="25" y="40" width="6" height="1" fill="#040404"/></svg>
<svg class="psf" width="184" height="235.75" viewBox="0 0 32 41" preserveAspectRatio="none" shape-rendering="crispEdges" style="left:437.3px;top:357.1px"><rect width="32" height="41" fill="#020202"/><rect x="2" y="0" width="7" height="1" fill="#040404"/><rect x="25" y="0" width="7" height="1" fill="#040404"/><rect x="3" y="1" width="6" height="1" fill="#040404"/><rect x="25" y="1" width="6" height="1" fill="#040404"/><rect x="3" y="2" width="3" height="1" fill="#040404"/><rect x="6" y="2" width="1" height="1" fill="#050505"/><rect x="7" y="2" width="3" height="1" fill="#040404"/><rect x="24" y="2" width="3" height="1" fill="#040404"/><rect x="27" y="2" width="1" height="1" fill="#050505"/><rect x="28" y="2" width="3" height="1" fill="#040404"/><rect x="4" y="3" width="2" height="1" fill="#040404"/><rect x="6" y="3" width="2" height="1" fill="#050505"/><rect x="8" y="3" width="2" height="1" fill="#040404"/><rect x="24" y="3" width="2" height="1" fill="#040404"/><rect x="26" y="3" width="2" height="1" fill="#050505"/><rect x="28" y="3" width="2" height="1" fill="#040404"/><rect x="4" y="4" width="2" height="1" fill="#040404"/><rect x="6" y="4" width="3" height="1" fill="#050505"/><rect x="9" y="4" width="2" height="1" fill="#040404"/><rect x="23" y="4" width="2" height="1" fill="#040404"/><rect x="25" y="4" width="3" height="1" fill="#050505"/><rect x="28" y="4" width="2" height="1" fill="#040404"/><rect x="4" y="5" width="2" height="1" fill="#040404"/><rect x="6" y="5" width="4" height="1" fill="#050505"/><rect x="10" y="5" width="2" height="1" fill="#040404"/><rect x="22" y="5" width="2" height="1" fill="#040404"/><rect x="24" y="5" width="4" height="1" fill="#050505"/><rect x="28" y="5" width="2" height="1" fill="#040404"/><rect x="5" y="6" width="1" height="1" fill="#040404"/><rect x="6" y="6" width="5" height="1" fill="#050505"/><rect x="11" y="6" width="1" height="1" fill="#040404"/><rect x="22" y="6" width="1" height="1" fill="#040404"/><rect x="23" y="6" width="5" height="1" fill="#050505"/><rect x="28" y="6" width="1" height="1" fill="#040404"/><rect x="5" y="7" width="2" height="1" fill="#040404"/><rect x="7" y="7" width="4" height="1" fill="#050505"/><rect x="11" y="7" width="2" height="1" fill="#040404"/><rect x="21" y="7" width="2" height="1" fill="#040404"/><rect x="23" y="7" width="4" height="1" fill="#050505"/><rect x="27" y="7" width="2" height="1" fill="#040404"/><rect x="6" y="8" width="1" height="1" fill="#040404"/><rect x="7" y="8" width="2" height="1" fill="#050505"/><rect x="9" y="8" width="1" height="1" fill="#060606"/><rect x="10" y="8" width="2" height="1" fill="#050505"/><rect x="12" y="8" width="1" height="1" fill="#040404"/><rect x="21" y="8" width="1" height="1" fill="#040404"/><rect x="22" y="8" width="2" height="1" fill="#050505"/><rect x="24" y="8" width="1" height="1" fill="#060606"/><rect x="25" y="8" width="2" height="1" fill="#050505"/><rect x="27" y="8" width="1" height="1" fill="#040404"/><rect x="6" y="9" width="1" height="1" fill="#040404"/><rect x="7" y="9" width="2" height="1" fill="#050505"/><rect x="9" y="9" width="2" height="1" fill="#060606"/><rect x="11" y="9" width="2" height="1" fill="#050505"/><rect x="13" y="9" width="3" height="1" fill="#040404"/><rect x="16" y="9" width="2" height="1" fill="#060606"/><rect x="18" y="9" width="3" height="1" fill="#040404"/><rect x="21" y="9" width="2" height="1" fill="#050505"/><rect x="23" y="9" width="2" height="1" fill="#060606"/><rect x="25" y="9" width="1" height="1" fill="#050505"/><rect x="26" y="9" width="2" height="1" fill="#040404"/><rect x="7" y="10" width="1" height="1" fill="#040404"/><rect x="8" y="10" width="1" height="1" fill="#050505"/><rect x="9" y="10" width="3" height="1" fill="#060606"/><rect x="12" y="10" width="3" height="1" fill="#050505"/><rect x="15" y="10" width="1" height="1" fill="#090909"/><rect x="16" y="10" width="2" height="1" fill="#0d0d0d"/><rect x="18" y="10" width="1" height="1" fill="#090909"/><rect x="19" y="10" width="3" height="1" fill="#050505"/><rect x="22" y="10" width="3" height="1" fill="#060606"/><rect x="25" y="10" width="1" height="1" fill="#050505"/><rect x="26" y="10" width="1" height="1" fill="#040404"/><rect x="8" y="11" width="1" height="1" fill="#050505"/><rect x="9" y="11" width="5" height="1" fill="#060606"/><rect x="14" y="11" width="1" height="1" fill="#080808"/><rect x="15" y="11" width="1" height="1" fill="#101010"/><rect x="16" y="11" width="2" height="1" fill="#181818"/><rect x="18" y="11" width="1" height="1" fill="#0f0f0f"/><rect x="19" y="11" width="1" height="1" fill="#080808"/><rect x="20" y="11" width="5" height="1" fill="#060606"/><rect x="25" y="11" width="1" height="1" fill="#050505"/><rect x="8" y="12" width="1" height="1" fill="#040404"/><rect x="9" y="12" width="1" height="1" fill="#050505"/><rect x="10" y="12" width="1" height="1" fill="#060606"/><rect x="11" y="12" width="3" height="1" fill="#070707"/><rect x="14" y="12" width="1" height="1" fill="#0b0b0b"/><rect x="15" y="12" width="1" height="1" fill="#151515"/><rect x="16" y="12" width="2" height="1" fill="#212121"/><rect x="18" y="12" width="1" height="1" fill="#151515"/><rect x="19" y="12" width="1" height="1" fill="#0a0a0a"/><rect x="20" y="12" width="3" height="1" fill="#070707"/><rect x="23" y="12" width="1" height="1" fill="#060606"/><rect x="24" y="12" width="1" height="1" fill="#050505"/><rect x="25" y="12" width="1" height="1" fill="#040404"/><rect x="9" y="13" width="1" height="1" fill="#050505"/><rect x="10" y="13" width="1" height="1" fill="#060606"/><rect x="11" y="13" width="2" height="1" fill="#070707"/><rect x="13" y="13" width="1" height="1" fill="#080808"/><rect x="14" y="13" width="1" height="1" fill="#0c0c0c"/><rect x="15" y="13" width="1" height="1" fill="#171717"/><rect x="16" y="13" width="2" height="1" fill="#222222"/><rect x="18" y="13" width="1" height="1" fill="#161616"/><rect x="19" y="13" width="1" height="1" fill="#0c0c0c"/><rect x="20" y="13" width="1" height="1" fill="#080808"/><rect x="21" y="13" width="2" height="1" fill="#070707"/><rect x="23" y="13" width="1" height="1" fill="#060606"/><rect x="24" y="13" width="1" height="1" fill="#050505"/><rect x="9" y="14" width="1" height="1" fill="#040404"/><rect x="10" y="14" width="1" height="1" fill="#050505"/><rect x="11" y="14" width="1" height="1" fill="#070707"/><rect x="12" y="14" width="1" height="1" fill="#080808"/><rect x="13" y="14" width="1" height="1" fill="#0a0a0a"/><rect x="14" y="14" width="1" height="1" fill="#0d0d0d"/><rect x="15" y="14" width="1" height="1" fill="#141414"/><rect x="16" y="14" width="1" height="1" fill="#1d1d1d"/><rect x="17" y="14" width="1" height="1" fill="#1c1c1c"/><rect x="18" y="14" width="1" height="1" fill="#141414"/><rect x="19" y="14" width="1" height="1" fill="#0d0d0d"/><rect x="20" y="14" width="1" height="1" fill="#0a0a0a"/><rect x="21" y="14" width="1" height="1" fill="#080808"/><rect x="22" y="14" width="1" height="1" fill="#070707"/><rect x="23" y="14" width="1" height="1" fill="#050505"/><rect x="24" y="14" width="1" height="1" fill="#040404"/><rect x="10" y="15" width="1" height="1" fill="#050505"/><rect x="11" y="15" width="1" height="1" fill="#070707"/><rect x="12" y="15" width="1" height="1" fill="#090909"/><rect x="13" y="15" width="1" height="1" fill="#0b0b0b"/><rect x="14" y="15" width="1" height="1" fill="#0e0e0e"/><rect x="15" y="15" width="1" height="1" fill="#131313"/><rect x="16" y="15" width="2" height="1" fill="#171717"/><rect x="18" y="15" width="1" height="1" fill="#131313"/><rect x="19" y="15" width="1" height="1" fill="#0e0e0e"/><rect x="20" y="15" width="1" height="1" fill="#0b0b0b"/><rect x="21" y="15" width="1" height="1" fill="#090909"/><rect x="22" y="15" width="1" height="1" fill="#070707"/><rect x="23" y="15" width="1" height="1" fill="#050505"/><rect x="10" y="16" width="1" height="1" fill="#040404"/><rect x="11" y="16" width="1" height="1" fill="#070707"/><rect x="12" y="16" width="1" height="1" fill="#0a0a0a"/><rect x="13" y="16" width="1" height="1" fill="#0d0d0d"/><rect x="14" y="16" width="1" height="1" fill="#111111"/><rect x="15" y="16" width="1" height="1" fill="#151515"/><rect x="16" y="16" width="2" height="1" fill="#181818"/><rect x="18" y="16" width="1" height="1" fill="#141414"/><rect x="19" y="16" width="1" height="1" fill="#111111"/><rect x="20" y="16" width="1" height="1" fill="#0d0d0d"/><rect x="21" y="16" width="1" height="1" fill="#0a0a0a"/><rect x="22" y="16" width="1" height="1" fill="#060606"/><rect x="23" y="16" width="1" height="1" fill="#040404"/><rect x="11" y="17" width="1" height="1" fill="#060606"/><rect x="12" y="17" width="1" height="1" fill="#0a0a0a"/><rect x="13" y="17" width="1" height="1" fill="#0f0f0f"/><rect x="14" y="17" width="1" height="1" fill="#151515"/><rect x="15" y="17" width="1" height="1" fill="#1b1b1b"/><rect x="16" y="17" width="2" height="1" fill="#212121"/><rect x="18" y="17" width="1" height="1" fill="#1b1b1b"/><rect x="19" y="17" width="1" height="1" fill="#141414"/><rect x="20" y="17" width="1" height="1" fill="#0f0f0f"/><rect x="21" y="17" width="1" height="1" fill="#0a0a0a"/><rect x="22" y="17" width="1" height="1" fill="#060606"/><rect x="11" y="18" width="1" height="1" fill="#040404"/><rect x="12" y="18" width="1" height="1" fill="#090909"/><rect x="13" y="18" width="1" height="1" fill="#0f0f0f"/><rect x="14" y="18" width="1" height="1" fill="#171717"/><rect x="15" y="18" width="1" height="1" fill="#242424"/><rect x="16" y="18" width="2" height="1" fill="#333333"/><rect x="18" y="18" width="1" height="1" fill="#232323"/><rect x="19" y="18" width="1" height="1" fill="#171717"/><rect x="20" y="18" width="1" height="1" fill="#0f0f0f"/><rect x="21" y="18" width="1" height="1" fill="#080808"/><rect x="22" y="18" width="1" height="1" fill="#040404"/><rect x="11" y="19" width="1" height="1" fill="#040404"/><rect x="12" y="19" width="1" height="1" fill="#080808"/><rect x="13" y="19" width="1" height="1" fill="#0f0f0f"/><rect x="14" y="19" width="1" height="1" fill="#1a1a1a"/><rect x="15" y="19" width="1" height="1" fill="#333333"/><rect x="16" y="19" width="1" height="1" fill="#555555"/><rect x="17" y="19" width="1" height="1" fill="#545454"/><rect x="18" y="19" width="1" height="1" fill="#323232"/><rect x="19" y="19" width="1" height="1" fill="#1a1a1a"/><rect x="20" y="19" width="1" height="1" fill="#0e0e0e"/><rect x="21" y="19" width="1" height="1" fill="#080808"/><rect x="11" y="20" width="1" height="1" fill="#040404"/><rect x="12" y="20" width="1" height="1" fill="#080808"/><rect x="13" y="20" width="1" height="1" fill="#0f0f0f"/><rect x="14" y="20" width="1" height="1" fill="#1f1f1f"/><rect x="15" y="20" width="1" height="1" fill="#494949"/><rect x="16" y="20" width="1" height="1" fill="#898989"/><rect x="17" y="20" width="1" height="1" fill="#878787"/><rect x="18" y="20" width="1" height="1" fill="#474747"/><rect x="19" y="20" width="1" height="1" fill="#1e1e1e"/><rect x="20" y="20" width="1" height="1" fill="#0f0f0f"/><rect x="21" y="20" width="1" height="1" fill="#080808"/><rect x="11" y="21" width="1" height="1" fill="#040404"/><rect x="12" y="21" width="1" height="1" fill="#090909"/><rect x="13" y="21" width="1" height="1" fill="#111111"/><rect x="14" y="21" width="1" height="1" fill="#262626"/><rect x="15" y="21" width="1" height="1" fill="#666666"/><rect x="16" y="21" width="1" height="1" fill="#c9c9c9"/><rect x="17" y="21" width="1" height="1" fill="#c6c6c6"/><rect x="18" y="21" width="1" height="1" fill="#626262"/><rect x="19" y="21" width="1" height="1" fill="#242424"/><rect x="20" y="21" width="1" height="1" fill="#111111"/><rect x="21" y="21" width="1" height="1" fill="#090909"/><rect x="22" y="21" width="1" height="1" fill="#040404"/><rect x="11" y="22" width="1" height="1" fill="#040404"/><rect x="12" y="22" width="1" height="1" fill="#0a0a0a"/><rect x="13" y="22" width="1" height="1" fill="#131313"/><rect x="14" y="22" width="1" height="1" fill="#2b2b2b"/><rect x="15" y="22" width="1" height="1" fill="#7e7e7e"/><rect x="16" y="22" width="1" height="1" fill="#ffffff"/><rect x="17" y="22" width="1" height="1" fill="#fcfcfc"/><rect x="18" y="22" width="1" height="1" fill="#797979"/><rect x="19" y="22" width="1" height="1" fill="#292929"/><rect x="20" y="22" width="1" height="1" fill="#121212"/><rect x="21" y="22" width="1" height="1" fill="#090909"/><rect x="22" y="22" width="1" height="1" fill="#040404"/><rect x="11" y="23" width="1" height="1" fill="#040404"/><rect x="12" y="23" width="1" height="1" fill="#0a0a0a"/><rect x="13" y="23" width="1" height="1" fill="#131313"/><rect x="14" y="23" width="1" height="1" fill="#2d2d2d"/><rect x="15" y="23" width="1" height="1" fill="#878787"/><rect x="16" y="23" width="2" height="1" fill="#ffffff"/><rect x="18" y="23" width="1" height="1" fill="#828282"/><rect x="19" y="23" width="1" height="1" fill="#2b2b2b"/><rect x="20" y="23" width="1" height="1" fill="#131313"/><rect x="21" y="23" width="1" height="1" fill="#090909"/><rect x="22" y="23" width="1" height="1" fill="#040404"/><rect x="11" y="24" width="1" height="1" fill="#040404"/><rect x="12" y="24" width="1" height="1" fill="#0a0a0a"/><rect x="13" y="24" width="1" height="1" fill="#131313"/><rect x="14" y="24" width="1" height="1" fill="#2b2b2b"/><rect x="15" y="24" width="1" height="1" fill="#7e7e7e"/><rect x="16" y="24" width="1" height="1" fill="#ffffff"/><rect x="17" y="24" width="1" height="1" fill="#fcfcfc"/><rect x="18" y="24" width="1" height="1" fill="#797979"/><rect x="19" y="24" width="1" height="1" fill="#292929"/><rect x="20" y="24" width="1" height="1" fill="#121212"/><rect x="21" y="24" width="1" height="1" fill="#090909"/><rect x="22" y="24" width="1" height="1" fill="#040404"/><rect x="11" y="25" width="1" height="1" fill="#040404"/><rect x="12" y="25" width="1" height="1" fill="#090909"/><rect x="13" y="25" width="1" height="1" fill="#111111"/><rect x="14" y="25" width="1" height="1" fill="#262626"/><rect x="15" y="25" width="1" height="1" fill="#666666"/><rect x="16" y="25" width="1" height="1" fill="#c9c9c9"/><rect x="17" y="25" width="1" height="1" fill="#c6c6c6"/><rect x="18" y="25" width="1" height="1" fill="#626262"/><rect x="19" y="25" width="1" height="1" fill="#242424"/><rect x="20" y="25" width="1" height="1" fill="#111111"/><rect x="21" y="25" width="1" height="1" fill="#090909"/><rect x="22" y="25" width="1" height="1" fill="#040404"/><rect x="11" y="26" width="1" height="1" fill="#040404"/><rect x="12" y="26" width="1" height="1" fill="#080808"/><rect x="13" y="26" width="1" height="1" fill="#0f0f0f"/><rect x="14" y="26" width="1" height="1" fill="#1f1f1f"/><rect x="15" y="26" width="1" height="1" fill="#494949"/><rect x="16" y="26" width="1" height="1" fill="#898989"/><rect x="17" y="26" width="1" height="1" fill="#878787"/><rect x="18" y="26" width="1" height="1" fill="#474747"/><rect x="19" y="26" width="1" height="1" fill="#1e1e1e"/><rect x="20" y="26" width="1" height="1" fill="#0f0f0f"/><rect x="21" y="26" width="1" height="1" fill="#080808"/><rect x="11" y="27" width="1" height="1" fill="#040404"/><rect x="12" y="27" width="1" height="1" fill="#080808"/><rect x="13" y="27" width="1" height="1" fill="#0f0f0f"/><rect x="14" y="27" width="1" height="1" fill="#1a1a1a"/><rect x="15" y="27" width="1" height="1" fill="#333333"/><rect x="16" y="27" width="1" height="1" fill="#555555"/><rect x="17" y="27" width="1" height="1" fill="#545454"/><rect x="18" y="27" width="1" height="1" fill="#323232"/><rect x="19" y="27" width="1" height="1" fill="#1a1a1a"/><rect x="20" y="27" width="1" height="1" fill="#0e0e0e"/><rect x="21" y="27" width="1" height="1" fill="#080808"/><rect x="11" y="28" width="1" height="1" fill="#040404"/><rect x="12" y="28" width="1" height="1" fill="#090909"/><rect x="13" y="28" width="1" height="1" fill="#0f0f0f"/><rect x="14" y="28" width="1" height="1" fill="#171717"/><rect x="15" y="28" width="1" height="1" fill="#242424"/><rect x="16" y="28" width="2" height="1" fill="#333333"/><rect x="18" y="28" width="1" height="1" fill="#232323"/><rect x="19" y="28" width="1" height="1" fill="#171717"/><rect x="20" y="28" width="1" height="1" fill="#0f0f0f"/><rect x="21" y="28" width="1" height="1" fill="#080808"/><rect x="22" y="28" width="1" height="1" fill="#040404"/><rect x="11" y="29" width="1" height="1" fill="#060606"/><rect x="12" y="29" width="1" height="1" fill="#0a0a0a"/><rect x="13" y="29" width="1" height="1" fill="#0f0f0f"/><rect x="14" y="29" width="1" height="1" fill="#141414"/><rect x="15" y="29" width="1" height="1" fill="#1b1b1b"/><rect x="16" y="29" width="2" height="1" fill="#202020"/><rect x="18" y="29" width="1" height="1" fill="#1a1a1a"/><rect x="19" y="29" width="1" height="1" fill="#141414"/><rect x="20" y="29" width="1" height="1" fill="#0f0f0f"/><rect x="21" y="29" width="1" height="1" fill="#0a0a0a"/><rect x="22" y="29" width="1" height="1" fill="#060606"/><rect x="10" y="30" width="1" height="1" fill="#040404"/><rect x="11" y="30" width="1" height="1" fill="#070707"/><rect x="12" y="30" width="1" height="1" fill="#0a0a0a"/><rect x="13" y="30" width="1" height="1" fill="#0d0d0d"/><rect x="14" y="30" width="1" height="1" fill="#101010"/><rect x="15" y="30" width="1" height="1" fill="#131313"/><rect x="16" y="30" width="1" height="1" fill="#151515"/><rect x="17" y="30" width="1" height="1" fill="#141414"/><rect x="18" y="30" width="1" height="1" fill="#131313"/><rect x="19" y="30" width="1" height="1" fill="#101010"/><rect x="20" y="30" width="1" height="1" fill="#0d0d0d"/><rect x="21" y="30" width="1" height="1" fill="#0a0a0a"/><rect x="22" y="30" width="1" height="1" fill="#060606"/><rect x="23" y="30" width="1" height="1" fill="#040404"/><rect x="10" y="31" width="1" height="1" fill="#050505"/><rect x="11" y="31" width="1" height="1" fill="#070707"/><rect x="12" y="31" width="1" height="1" fill="#090909"/><rect x="13" y="31" width="1" height="1" fill="#0b0b0b"/><rect x="14" y="31" width="1" height="1" fill="#0c0c0c"/><rect x="15" y="31" width="4" height="1" fill="#0e0e0e"/><rect x="19" y="31" width="1" height="1" fill="#0c0c0c"/><rect x="20" y="31" width="1" height="1" fill="#0b0b0b"/><rect x="21" y="31" width="1" height="1" fill="#090909"/><rect x="22" y="31" width="1" height="1" fill="#070707"/><rect x="23" y="31" width="1" height="1" fill="#050505"/><rect x="9" y="32" width="1" height="1" fill="#040404"/><rect x="10" y="32" width="1" height="1" fill="#050505"/><rect x="11" y="32" width="1" height="1" fill="#070707"/><rect x="12" y="32" width="1" height="1" fill="#080808"/><rect x="13" y="32" width="1" height="1" fill="#090909"/><rect x="14" y="32" width="2" height="1" fill="#0a0a0a"/><rect x="16" y="32" width="2" height="1" fill="#090909"/><rect x="18" y="32" width="2" height="1" fill="#0a0a0a"/><rect x="20" y="32" width="1" height="1" fill="#090909"/><rect x="21" y="32" width="1" height="1" fill="#080808"/><rect x="22" y="32" width="1" height="1" fill="#070707"/><rect x="23" y="32" width="1" height="1" fill="#050505"/><rect x="24" y="32" width="1" height="1" fill="#040404"/><rect x="9" y="33" width="1" height="1" fill="#050505"/><rect x="10" y="33" width="1" height="1" fill="#060606"/><rect x="11" y="33" width="5" height="1" fill="#070707"/><rect x="16" y="33" width="2" height="1" fill="#060606"/><rect x="18" y="33" width="5" height="1" fill="#070707"/><rect x="23" y="33" width="1" height="1" fill="#060606"/><rect x="24" y="33" width="1" height="1" fill="#050505"/><rect x="8" y="34" width="1" height="1" fill="#040404"/><rect x="9" y="34" width="1" height="1" fill="#050505"/><rect x="10" y="34" width="1" height="1" fill="#060606"/><rect x="11" y="34" width="2" height="1" fill="#070707"/><rect x="13" y="34" width="2" height="1" fill="#060606"/><rect x="15" y="34" width="1" height="1" fill="#050505"/><rect x="16" y="34" width="2" height="1" fill="#040404"/><rect x="18" y="34" width="1" height="1" fill="#050505"/><rect x="19" y="34" width="2" height="1" fill="#060606"/><rect x="21" y="34" width="2" height="1" fill="#070707"/><rect x="23" y="34" width="1" height="1" fill="#060606"/><rect x="24" y="34" width="1" height="1" fill="#050505"/><rect x="25" y="34" width="1" height="1" fill="#040404"/><rect x="8" y="35" width="1" height="1" fill="#050505"/><rect x="9" y="35" width="4" height="1" fill="#060606"/><rect x="13" y="35" width="1" height="1" fill="#050505"/><rect x="14" y="35" width="2" height="1" fill="#040404"/><rect x="18" y="35" width="2" height="1" fill="#040404"/><rect x="20" y="35" width="1" height="1" fill="#050505"/><rect x="21" y="35" width="4" height="1" fill="#060606"/><rect x="25" y="35" width="1" height="1" fill="#050505"/><rect x="7" y="36" width="1" height="1" fill="#040404"/><rect x="8" y="36" width="1" height="1" fill="#050505"/><rect x="9" y="36" width="3" height="1" fill="#060606"/><rect x="12" y="36" width="1" height="1" fill="#050505"/><rect x="13" y="36" width="1" height="1" fill="#040404"/><rect x="19" y="36" width="2" height="1" fill="#040404"/><rect x="21" y="36" width="1" height="1" fill="#050505"/><rect x="22" y="36" width="3" height="1" fill="#060606"/><rect x="25" y="36" width="1" height="1" fill="#050505"/><rect x="26" y="36" width="1" height="1" fill="#040404"/><rect x="6" y="37" width="1" height="1" fill="#040404"/><rect x="7" y="37" width="2" height="1" fill="#050505"/><rect x="9" y="37" width="2" height="1" fill="#060606"/><rect x="11" y="37" width="2" height="1" fill="#050505"/><rect x="13" y="37" width="1" height="1" fill="#040404"/><rect x="20" y="37" width="1" height="1" fill="#040404"/><rect x="21" y="37" width="2" height="1" fill="#050505"/><rect x="23" y="37" width="2" height="1" fill="#060606"/><rect x="25" y="37" width="1" height="1" fill="#050505"/><rect x="26" y="37" width="2" height="1" fill="#040404"/><rect x="6" y="38" width="1" height="1" fill="#040404"/><rect x="7" y="38" width="2" height="1" fill="#050505"/><rect x="9" y="38" width="1" height="1" fill="#060606"/><rect x="10" y="38" width="2" height="1" fill="#050505"/><rect x="12" y="38" width="1" height="1" fill="#040404"/><rect x="21" y="38" width="1" height="1" fill="#040404"/><rect x="22" y="38" width="2" height="1" fill="#050505"/><rect x="24" y="38" width="1" height="1" fill="#060606"/><rect x="25" y="38" width="2" height="1" fill="#050505"/><rect x="27" y="38" width="1" height="1" fill="#040404"/><rect x="5" y="39" width="2" height="1" fill="#040404"/><rect x="7" y="39" width="4" height="1" fill="#050505"/><rect x="11" y="39" width="2" height="1" fill="#040404"/><rect x="21" y="39" width="2" height="1" fill="#040404"/><rect x="23" y="39" width="4" height="1" fill="#050505"/><rect x="27" y="39" width="2" height="1" fill="#040404"/><rect x="5" y="40" width="1" height="1" fill="#040404"/><rect x="6" y="40" width="5" height="1" fill="#050505"/><rect x="11" y="40" width="1" height="1" fill="#040404"/><rect x="22" y="40" width="1" height="1" fill="#040404"/><rect x="23" y="40" width="5" height="1" fill="#050505"/><rect x="28" y="40" width="1" height="1" fill="#040404"/></svg>
<span class="t b c" style="left:0px;top:621px;left:240.3px;width:189px">Plane 1 (YZ)</span>
<span class="t b c" style="left:0px;top:621px;left:435.6px;width:187.6px">Plane 2 (YZ)</span>
<svg class="grip" width="10" height="10" viewBox="0 0 10 10"><g fill="#6a6a6d"><rect x="8" y="0" width="1.4" height="1.4"/><rect x="5.5" y="2.6" width="1.4" height="1.4"/><rect x="8" y="2.6" width="1.4" height="1.4"/><rect x="3" y="5.2" width="1.4" height="1.4"/><rect x="5.5" y="5.2" width="1.4" height="1.4"/><rect x="8" y="5.2" width="1.4" height="1.4"/><rect x="0.5" y="7.8" width="1.4" height="1.4"/><rect x="3" y="7.8" width="1.4" height="1.4"/><rect x="5.5" y="7.8" width="1.4" height="1.4"/><rect x="8" y="7.8" width="1.4" height="1.4"/></g></svg>
</div>
<div class="win wr" style="left:646px;width:634px">
<div class="tb"><svg width="13" height="16" viewBox="0 0 13 16" style="position:absolute;left:0;top:4.9px"><path d="M0 0.6C1.5 -0.2 4.4 -0.3 5.8 1C7.3 2.4 7.4 5 6.2 6.8C5.7 7.5 5.4 8.4 5.6 9.2C6.6 10.4 6.3 12.4 4.9 13.2C3.5 13.9 1.7 13.4 1.2 12C0.9 11.1 1.2 10.2 1.7 9.5C1.4 8.7 0.7 8.1 0 7.8Z" fill="#1874cd"/><circle cx="9.4" cy="2.1" r="1.7" fill="#1874cd"/></svg><span class="title">PSF Viewer</span><svg class="close" width="11" height="11" viewBox="0 0 11 11"><path d="M1 1L10 10M10 1L1 10" stroke="#3a3a3a" stroke-width="1.1" fill="none"/></svg></div>
<div class="sep" style="left:1px;top:51px;width:232px"></div>
<span class="t b" style="left:3.5px;top:54px">Statistics</span>
<div class="sep" style="left:3.5px;top:67.5px;width:229px"></div>
<span class="t " style="left:10px;top:75px">PSF Channel:</span>
<span class="t " style="right:409.2px;top:75px">Color 1</span>
<span class="t " style="left:10px;top:87px">Plane 1:</span>
<span class="t " style="left:18px;top:100px">Peak position:</span>
<span class="t " style="right:409.2px;top:100px">2266 nm</span>
<span class="t " style="left:18px;top:113px">Standard deviation:</span>
<span class="t " style="right:409.2px;top:113px">284 nm</span>
<span class="t " style="left:18px;top:125px">FWHM:</span>
<span class="t " style="right:409.2px;top:125px">668 nm</span>
<span class="t " style="left:18px;top:138px">Peak intensity:</span>
<span class="t " style="right:409.2px;top:138px">0.906699</span>
<span class="t " style="left:10px;top:150px">Plane 2:</span>
<span class="t " style="left:18px;top:163px">Peak position:</span>
<span class="t " style="right:409.2px;top:163px">1679 nm</span>
<span class="t " style="left:18px;top:176px">Standard deviation:</span>
<span class="t " style="right:409.2px;top:176px">296 nm</span>
<span class="t " style="left:20.6px;top:188px">FWHM:</span>
<span class="t " style="right:409.2px;top:188px">695 nm</span>
<span class="t " style="left:18px;top:201px">Peak intensity:</span>
<span class="t " style="right:409.2px;top:201px">0.97699</span>
<span class="t " style="left:10px;top:214px">Distance between peaks:</span>
<span class="t " style="right:409.2px;top:214px">587 nm</span>
<span class="t b" style="left:3.5px;top:240px">Display Options</span>
<div class="sep" style="left:3.5px;top:252.6px;width:229px"></div>
<span class="t " style="left:10px;top:264px">PSF:</span>
<div class="combo" style="left:83.5px;top:259.5px;width:141px;height:18px"><svg width="8" height="5" viewBox="0 0 8 5" style="position:absolute;left:128.6px;top:6.8px"><path d="M0.3 0.3H7.1L3.7 4.2Z" fill="#e4e4e4"/></svg></div>
<span class="t " style="left:87.3px;top:264px">Orange</span>
<span class="t " style="left:10px;top:282px">PSF type:</span>
<svg class="radio" width="14" height="14" viewBox="0 0 14 14" style="left:81px;top:280.3px"><circle cx="7" cy="7" r="5.5" fill="#2a2a2c" stroke="#414145" stroke-width="1.2"/><circle cx="7" cy="7" r="2.75" fill="#c8c8c8"/></svg>
<span class="t " style="left:98px;top:282px">Measured</span>
<svg class="radio" width="14" height="14" viewBox="0 0 14 14" style="left:153.5px;top:280.3px"><circle cx="7" cy="7" r="5.5" fill="#2a2a2c" stroke="#414145" stroke-width="1.2"/></svg>
<span class="t " style="left:171px;top:282px">Standard</span>
<span class="t " style="left:10px;top:300px">View:</span>
<svg class="radio" width="14" height="14" viewBox="0 0 14 14" style="left:63.3px;top:297.9px"><circle cx="7" cy="7" r="5.5" fill="#2a2a2c" stroke="#414145" stroke-width="1.2"/></svg>
<span class="t " style="left:80.9px;top:300px">YZ</span>
<svg class="radio" width="14" height="14" viewBox="0 0 14 14" style="left:117.4px;top:297.9px"><circle cx="7" cy="7" r="5.5" fill="#2a2a2c" stroke="#414145" stroke-width="1.2"/></svg>
<span class="t " style="left:135px;top:300px">XZ</span>
<svg class="radio" width="14" height="14" viewBox="0 0 14 14" style="left:171.6px;top:297.9px"><circle cx="7" cy="7" r="5.5" fill="#2a2a2c" stroke="#414145" stroke-width="1.2"/><circle cx="7" cy="7" r="2.75" fill="#c8c8c8"/></svg>
<span class="t " style="left:189.2px;top:300px">XY</span>
<span class="t " style="left:10px;top:316px">Slice:</span>
<div class="track" style="left:35px;top:321px;width:189px"></div>
<div class="fill" style="left:35px;top:320px;width:76.3px"></div>
<div class="thumb" style="left:111.3px;top:317px"></div>
<svg class="chk" width="14" height="14" viewBox="0 0 14 14" style="left:9.25px;top:330.4px"><rect x="1.5" y="1.6" width="11" height="11" fill="#2a2a2c" stroke="#444448" stroke-width="1.1"/></svg>
<span class="t " style="left:26px;top:332px">Show PSF center for current slice</span>
<svg class="chk" width="14" height="14" viewBox="0 0 14 14" style="left:9.25px;top:348.3px"><rect x="1.5" y="1.6" width="11" height="11" fill="#2a2a2c" stroke="#444448" stroke-width="1.1"/><path d="M2.1 7.6L5.8 11.1L11.4 2.4" fill="none" stroke="#e2e2e2" stroke-width="1.3"/></svg>
<span class="t " style="left:26px;top:350px;letter-spacing:-0.24px">Normalize images</span>
<span class="t b" style="left:3.5px;top:378px">Quality</span>
<div class="sep" style="left:3.5px;top:391px;width:229px"></div>
<span class="t b" style="left:69.4px;top:401px">Z FWHM</span>
<span class="t b" style="left:127.5px;top:402px">Z Tilt</span>
<span class="t b" style="left:189.4px;top:401px">SNR</span>
<div class="qbtn" style="left:208.5px;top:398px;width:16px;height:16px"></div>
<span class="t b" style="left:213.8px;top:401px">?</span>
<span class="t b" style="left:10.25px;top:417px">Green</span>
<span class="t " style="left:19.75px;top:429px">Plane 1:</span>
<span class="t g" style="left:69px;top:429px">608.646 nm</span>
<span class="t g" style="left:127px;top:429px">0.720169 px</span>
<span class="t g" style="left:189.4px;top:429px">376.652</span>
<span class="t " style="left:19.75px;top:442px">Plane 2:</span>
<span class="t g" style="left:69px;top:442px">627.347 nm</span>
<span class="t g" style="left:127px;top:442px">0.759326 px</span>
<span class="t g" style="left:189.4px;top:442px">391.183</span>
<span class="t b" style="left:10.25px;top:454px">Orange</span>
<span class="t " style="left:19.75px;top:467px">Plane 1:</span>
<span class="t g" style="left:69px;top:467px">668.046 nm</span>
<span class="t g" style="left:127px;top:467px">0.830911 px</span>
<span class="t g" style="left:189.4px;top:467px">591.871</span>
<span class="t " style="left:19.75px;top:480px">Plane 2:</span>
<span class="t g" style="left:69px;top:480px">695.738 nm</span>
<span class="t g" style="left:127px;top:480px">0.64423 px</span>
<span class="t g" style="left:189.4px;top:480px">370.464</span>
<span class="t b" style="left:10.25px;top:492px">Red</span>
<span class="t " style="left:19.75px;top:505px">Plane 1:</span>
<span class="t g" style="left:69px;top:505px">771.34 nm</span>
<span class="t g" style="left:127px;top:505px">0.660385 px</span>
<span class="t g" style="left:189.4px;top:505px">407.479</span>
<span class="t " style="left:19.75px;top:518px">Plane 2:</span>
<span class="t g" style="left:69px;top:518px">784.785 nm</span>
<span class="t g" style="left:127px;top:518px">0.618789 px</span>
<span class="t g" style="left:189.4px;top:518px">298.314</span>
<span class="t b" style="left:10.25px;top:530px">Summary:</span>
<span class="t g" style="left:69px;top:530px">Good</span>
<svg class="chart" width="400" height="312" viewBox="234 24 400 312" style="left:234px;top:24px">
<g font-family="'DejaVu Sans Condensed','Liberation Sans',sans-serif" font-weight="700" fill="#f2f2f2">
<text x="424.3" y="51.5" font-size="15.9" text-anchor="middle">PSF Intensity</text>
<text x="418.5" y="328.5" font-size="13.8" text-anchor="middle">Z-Position (nm)</text>
<text transform="translate(253.6 175.7) rotate(-90)" font-size="13.8" text-anchor="middle">Intensity</text>
</g>
<g stroke="#c8c8c8" stroke-width="1" stroke-dasharray="1.1 1.1" opacity="0.85">
<line x1="289" y1="247.7" x2="549.3" y2="247.7"/>
<line x1="289" y1="206.4" x2="549.3" y2="206.4"/>
<line x1="289" y1="165.1" x2="549.3" y2="165.1"/>
<line x1="289" y1="123.8" x2="549.3" y2="123.8"/>
<line x1="289" y1="82.5" x2="549.3" y2="82.5"/>
</g>
<clipPath id="c4000"><rect x="289" y="61" width="260.3" height="228.3"/></clipPath>
<g clip-path="url(#c4000)" fill="none" stroke-linejoin="round">
<polyline points="288.8,285.7 295.32,285.7 301.85,285.7 308.38,285.7 314.9,285.7 321.43,285.7 327.95,285.7 334.48,285.7 341,285.7 347.52,285.7 354.05,285.69 360.57,285.67 367.1,285.59 373.62,285.3 380.15,284.39 386.68,281.92 393.2,276.08 399.73,264.14 406.25,243.16 412.77,211.8 419.3,172.69 425.82,133.59 432.35,105.46 438.88,97.71 445.4,113.11 451.92,146.22 458.45,186.42 464.98,223.07 471.5,249.41 478.02,264.56 484.55,272.27 491.07,274.88 497.6,273.44 504.12,271.93 510.65,273.79 517.17,278.09 523.7,281.81 530.22,283.64 536.75,284.25 543.27,284.57 549.8,284.94" stroke="#1c7fd2" stroke-width="1.0"/>
<polyline points="288.8,284.04 290.43,284.04 292.06,284.04 293.69,284.04 295.32,284.04 296.96,284.04 298.59,284.04 300.22,284.04 301.85,284.04 303.48,284.04 305.11,284.04 306.74,284.04 308.38,284.04 310.01,284.04 311.64,284.04 313.27,284.04 314.9,284.04 316.53,284.04 318.16,284.04 319.79,284.04 321.43,284.04 323.06,284.04 324.69,284.04 326.32,284.04 327.95,284.04 329.58,284.04 331.21,284.04 332.84,284.04 334.48,284.04 336.11,284.04 337.74,284.04 339.37,284.04 341,284.04 342.63,284.04 344.26,284.04 345.89,284.04 347.52,284.04 349.16,284.04 350.79,284.04 352.42,284.04 354.05,284.03 355.68,284.03 357.31,284.02 358.94,284.02 360.57,284 362.21,283.99 363.84,283.96 365.47,283.93 367.1,283.88 368.73,283.82 370.36,283.73 371.99,283.62 373.62,283.47 375.26,283.27 376.89,283.01 378.52,282.67 380.15,282.24 381.78,281.7 383.41,281.01 385.04,280.15 386.68,279.09 388.31,277.78 389.94,276.2 391.57,274.28 393.2,272 394.83,269.3 396.46,266.12 398.09,262.44 399.73,258.2 401.36,253.36 402.99,247.9 404.62,241.79 406.25,235.04 407.88,227.64 409.51,219.63 411.14,211.04 412.77,201.96 414.41,192.45 416.04,182.64 417.67,172.63 419.3,162.59 420.93,152.66 422.56,143.02 424.19,133.83 425.82,125.29 427.46,117.55 429.09,110.79 430.72,105.14 432.35,100.73 433.98,97.67 435.61,96.01 437.24,95.81 438.88,97.06 440.51,99.74 442.14,103.78 443.77,109.09 445.4,115.55 447.03,123.03 448.66,131.37 450.29,140.39 451.92,149.92 453.56,159.79 455.19,169.82 456.82,179.85 458.45,189.73 460.08,199.33 461.71,208.55 463.34,217.28 464.98,225.46 466.61,233.03 468.24,239.96 469.87,246.25 471.5,251.89 473.13,256.9 474.76,261.31 476.39,265.15 478.02,268.46 479.66,271.29 481.29,273.68 482.92,275.7 484.55,277.37 486.18,278.75 487.81,279.87 489.44,280.79 491.07,281.52 492.71,282.1 494.34,282.56 495.97,282.92 497.6,283.2 499.23,283.41 500.86,283.58 502.49,283.7 504.12,283.79 505.76,283.86 507.39,283.91 509.02,283.95 510.65,283.98 512.28,284 513.91,284.01 515.54,284.02 517.17,284.03 518.81,284.03 520.44,284.04 522.07,284.04 523.7,284.04 525.33,284.04 526.96,284.04 528.59,284.04 530.22,284.04 531.86,284.04 533.49,284.04 535.12,284.04 536.75,284.04 538.38,284.04 540.01,284.04 541.64,284.04 543.27,284.04 544.91,284.04 546.54,284.04 548.17,284.04 549.8,284.04" stroke="#155f98" stroke-width="1.15"/>
<polyline points="288.8,282.73 295.32,282.37 301.85,281.89 308.38,281.41 314.9,281.13 321.43,281.18 327.95,281.5 334.48,281.73 341,281.17 347.52,278.58 354.05,271.99 360.57,258.67 367.1,235.93 373.62,202.83 380.15,162.31 386.68,122.07 393.2,92.83 399.73,82.5 406.25,92.83 412.77,129.96 419.3,171.24 425.82,210.94 432.35,242.68 438.88,266.07 445.4,279.58 451.92,279.21 458.45,273.26 464.98,268.64 471.5,268.56 478.02,273.75 484.55,281.03 491.07,286.83 497.6,288.17 504.12,288.17 510.65,286.83 517.17,284.83 523.7,283.98 530.22,284.46 536.75,285.5 543.27,286.27 549.8,286.62" stroke="#10ea10" stroke-width="1.15"/>
<polyline points="288.8,282.19 290.43,282.19 292.06,282.19 293.69,282.19 295.32,282.19 296.96,282.19 298.59,282.19 300.22,282.19 301.85,282.18 303.48,282.18 305.11,282.18 306.74,282.18 308.38,282.18 310.01,282.18 311.64,282.18 313.27,282.17 314.9,282.17 316.53,282.16 318.16,282.15 319.79,282.13 321.43,282.11 323.06,282.08 324.69,282.05 326.32,281.99 327.95,281.92 329.58,281.83 331.21,281.71 332.84,281.54 334.48,281.34 336.11,281.07 337.74,280.72 339.37,280.28 341,279.73 342.63,279.04 344.26,278.19 345.89,277.14 347.52,275.86 349.16,274.32 350.79,272.46 352.42,270.26 354.05,267.66 355.68,264.62 357.31,261.09 358.94,257.03 360.57,252.4 362.21,247.18 363.84,241.33 365.47,234.84 367.1,227.71 368.73,219.96 370.36,211.6 371.99,202.7 373.62,193.3 375.26,183.5 376.89,173.41 378.52,163.12 380.15,152.8 381.78,142.57 383.41,132.62 385.04,123.08 386.68,114.15 388.31,105.97 389.94,98.71 391.57,92.51 393.2,87.49 394.83,83.76 396.46,81.4 398.09,80.45 399.73,80.94 401.36,82.86 402.99,86.16 404.62,90.77 406.25,96.61 407.88,103.54 409.51,111.44 411.14,120.15 412.77,129.51 414.41,139.35 416.04,149.51 417.67,159.82 419.3,170.13 420.93,180.3 422.56,190.21 424.19,199.74 425.82,208.81 427.46,217.35 429.09,225.3 430.72,232.63 432.35,239.32 433.98,245.38 435.61,250.8 437.24,255.61 438.88,259.85 440.51,263.54 442.14,266.74 443.77,269.47 445.4,271.8 447.03,273.76 448.66,275.4 450.29,276.76 451.92,277.88 453.56,278.79 455.19,279.53 456.82,280.12 458.45,280.59 460.08,280.96 461.71,281.26 463.34,281.48 464.98,281.66 466.61,281.79 468.24,281.9 469.87,281.97 471.5,282.03 473.13,282.07 474.76,282.1 476.39,282.13 478.02,282.14 479.66,282.16 481.29,282.17 482.92,282.17 484.55,282.18 486.18,282.18 487.81,282.18 489.44,282.18 491.07,282.18 492.71,282.18 494.34,282.18 495.97,282.18 497.6,282.19 499.23,282.19 500.86,282.19 502.49,282.19 504.12,282.19 505.76,282.19 507.39,282.19 509.02,282.19 510.65,282.19 512.28,282.19 513.91,282.19 515.54,282.19 517.17,282.19 518.81,282.19 520.44,282.19 522.07,282.19 523.7,282.19 525.33,282.19 526.96,282.19 528.59,282.19 530.22,282.19 531.86,282.19 533.49,282.19 535.12,282.19 536.75,282.19 538.38,282.19 540.01,282.19 541.64,282.19 543.27,282.19 544.91,282.19 546.54,282.19 548.17,282.19 549.8,282.19" stroke="#0c9c0c" stroke-width="1.1"/>
</g>
<line x1="400.1" y1="60" x2="400.1" y2="290" stroke="#c4c4c4" stroke-width="1.4"/>
<line x1="289" y1="288.9" x2="549.3" y2="288.9" stroke="#c8c8c8" stroke-width="1" stroke-dasharray="1.1 1.1" opacity="0.8"/>
<rect x="288.05" y="60" width="262.25" height="230.5" fill="none" stroke="#cacaca" stroke-width="1.8"/>
<g stroke="#c4c4c4" stroke-width="1.1">
<line x1="284.5" y1="60.3" x2="284.5" y2="289.5"/>
<line x1="279" y1="60.7" x2="284.5" y2="60.7"/>
<line x1="277.4" y1="289" x2="284.5" y2="289"/>
<line x1="280.6" y1="278.68" x2="284.5" y2="278.68"/>
<line x1="279.6" y1="268.35" x2="284.5" y2="268.35"/>
<line x1="280.6" y1="258.02" x2="284.5" y2="258.02"/>
<line x1="277.4" y1="247.7" x2="284.5" y2="247.7"/>
<line x1="280.6" y1="237.38" x2="284.5" y2="237.38"/>
<line x1="279.6" y1="227.05" x2="284.5" y2="227.05"/>
<line x1="280.6" y1="216.72" x2="284.5" y2="216.72"/>
<line x1="277.4" y1="206.4" x2="284.5" y2="206.4"/>
<line x1="280.6" y1="196.07" x2="284.5" y2="196.07"/>
<line x1="279.6" y1="185.75" x2="284.5" y2="185.75"/>
<line x1="280.6" y1="175.43" x2="284.5" y2="175.43"/>
<line x1="277.4" y1="165.1" x2="284.5" y2="165.1"/>
<line x1="280.6" y1="154.78" x2="284.5" y2="154.78"/>
<line x1="279.6" y1="144.45" x2="284.5" y2="144.45"/>
<line x1="280.6" y1="134.12" x2="284.5" y2="134.12"/>
<line x1="277.4" y1="123.8" x2="284.5" y2="123.8"/>
<line x1="280.6" y1="113.47" x2="284.5" y2="113.47"/>
<line x1="279.6" y1="103.15" x2="284.5" y2="103.15"/>
<line x1="280.6" y1="92.82" x2="284.5" y2="92.82"/>
<line x1="277.4" y1="82.5" x2="284.5" y2="82.5"/>
<line x1="280.6" y1="72.17" x2="284.5" y2="72.17"/>
<line x1="288.2" y1="293.6" x2="550.4" y2="293.6"/>
<line x1="288.8" y1="293.2" x2="288.8" y2="300"/>
<line x1="295.32" y1="293.2" x2="295.32" y2="296.9"/>
<line x1="301.85" y1="293.2" x2="301.85" y2="296.9"/>
<line x1="308.38" y1="293.2" x2="308.38" y2="296.9"/>
<line x1="314.9" y1="293.2" x2="314.9" y2="296.9"/>
<line x1="321.43" y1="293.2" x2="321.43" y2="300"/>
<line x1="327.95" y1="293.2" x2="327.95" y2="296.9"/>
<line x1="334.48" y1="293.2" x2="334.48" y2="296.9"/>
<line x1="341" y1="293.2" x2="341" y2="296.9"/>
<line x1="347.52" y1="293.2" x2="347.52" y2="296.9"/>
<line x1="354.05" y1="293.2" x2="354.05" y2="300"/>
<line x1="360.57" y1="293.2" x2="360.57" y2="296.9"/>
<line x1="367.1" y1="293.2" x2="367.1" y2="296.9"/>
<line x1="373.62" y1="293.2" x2="373.62" y2="296.9"/>
<line x1="380.15" y1="293.2" x2="380.15" y2="296.9"/>
<line x1="386.68" y1="293.2" x2="386.68" y2="300"/>
<line x1="393.2" y1="293.2" x2="393.2" y2="296.9"/>
<line x1="399.73" y1="293.2" x2="399.73" y2="296.9"/>
<line x1="406.25" y1="293.2" x2="406.25" y2="296.9"/>
<line x1="412.77" y1="293.2" x2="412.77" y2="296.9"/>
<line x1="419.3" y1="293.2" x2="419.3" y2="300"/>
<line x1="425.82" y1="293.2" x2="425.82" y2="296.9"/>
<line x1="432.35" y1="293.2" x2="432.35" y2="296.9"/>
<line x1="438.88" y1="293.2" x2="438.88" y2="296.9"/>
<line x1="445.4" y1="293.2" x2="445.4" y2="296.9"/>
<line x1="451.92" y1="293.2" x2="451.92" y2="300"/>
<line x1="458.45" y1="293.2" x2="458.45" y2="296.9"/>
<line x1="464.98" y1="293.2" x2="464.98" y2="296.9"/>
<line x1="471.5" y1="293.2" x2="471.5" y2="296.9"/>
<line x1="478.02" y1="293.2" x2="478.02" y2="296.9"/>
<line x1="484.55" y1="293.2" x2="484.55" y2="300"/>
<line x1="491.07" y1="293.2" x2="491.07" y2="296.9"/>
<line x1="497.6" y1="293.2" x2="497.6" y2="296.9"/>
<line x1="504.12" y1="293.2" x2="504.12" y2="296.9"/>
<line x1="510.65" y1="293.2" x2="510.65" y2="296.9"/>
<line x1="517.17" y1="293.2" x2="517.17" y2="300"/>
<line x1="523.7" y1="293.2" x2="523.7" y2="296.9"/>
<line x1="530.22" y1="293.2" x2="530.22" y2="296.9"/>
<line x1="536.75" y1="293.2" x2="536.75" y2="296.9"/>
<line x1="543.27" y1="293.2" x2="543.27" y2="296.9"/>
<line x1="549.8" y1="293.2" x2="549.8" y2="300"/>
</g>
<g font-family="'DejaVu Sans Condensed','Liberation Sans',sans-serif" font-weight="700" font-size="9.3" fill="#dedede">
<text x="272.9" y="292.5" text-anchor="end">0</text>
<text x="272.9" y="251.2" text-anchor="end">0.2</text>
<text x="272.9" y="209.9" text-anchor="end">0.4</text>
<text x="272.9" y="168.6" text-anchor="end">0.6</text>
<text x="272.9" y="127.3" text-anchor="end">0.8</text>
<text x="272.9" y="86" text-anchor="end">1</text>
<text x="288.4" y="312.3" text-anchor="middle">0</text>
<text x="321.03" y="312.3" text-anchor="middle">500</text>
<text x="353.65" y="312.3" text-anchor="middle">1,000</text>
<text x="386.28" y="312.3" text-anchor="middle">1,500</text>
<text x="418.9" y="312.3" text-anchor="middle">2,000</text>
<text x="451.52" y="312.3" text-anchor="middle">2,500</text>
<text x="484.15" y="312.3" text-anchor="middle">3,000</text>
<text x="516.77" y="312.3" text-anchor="middle">3,500</text>
<text x="549.4" y="312.3" text-anchor="middle">4,000</text>
</g>
<g font-family="'DejaVu Sans Condensed','Liberation Sans',sans-serif" font-size="9.1" fill="#ececec">
<rect x="568.4" y="63.6" width="6.9" height="6.9" fill="#1080d8"/><text x="579.5" y="70.3">Plane 1</text>
<rect x="568.4" y="83.05" width="6.9" height="6.9" fill="#0e5c98"/><text x="579.5" y="89.75">Plane 1 Fit</text>
<rect x="568.4" y="102.5" width="6.9" height="6.9" fill="#06f806"/><text x="579.5" y="109.2">Plane 2</text>
<rect x="568.4" y="121.95" width="6.9" height="6.9" fill="#06a006"/><text x="579.5" y="128.65">Plane 2 Fit</text>
</g>
</svg>
<div class="panel" style="left:240.3px;top:336.3px;width:188.2px;height:277.7px"></div>
<div class="panel" style="left:435.6px;top:336.3px;width:187px;height:277.7px"></div>
<svg class="psf" width="184" height="184" viewBox="0 0 32 32" preserveAspectRatio="none" shape-rendering="crispEdges" style="left:243.1px;top:383.5px"><rect width="32" height="32" fill="#070707"/><rect x="15" y="6" width="3" height="1" fill="#090909"/><rect x="12" y="7" width="1" height="1" fill="#090909"/><rect x="13" y="7" width="1" height="1" fill="#0a0a0a"/><rect x="14" y="7" width="1" height="1" fill="#0b0b0b"/><rect x="15" y="7" width="3" height="1" fill="#0c0c0c"/><rect x="18" y="7" width="1" height="1" fill="#0b0b0b"/><rect x="19" y="7" width="1" height="1" fill="#0a0a0a"/><rect x="20" y="7" width="1" height="1" fill="#090909"/><rect x="10" y="8" width="1" height="1" fill="#090909"/><rect x="11" y="8" width="1" height="1" fill="#0a0a0a"/><rect x="12" y="8" width="1" height="1" fill="#0c0c0c"/><rect x="13" y="8" width="1" height="1" fill="#0e0e0e"/><rect x="14" y="8" width="1" height="1" fill="#101010"/><rect x="15" y="8" width="2" height="1" fill="#111111"/><rect x="17" y="8" width="1" height="1" fill="#101010"/><rect x="18" y="8" width="1" height="1" fill="#0f0f0f"/><rect x="19" y="8" width="1" height="1" fill="#0d0d0d"/><rect x="20" y="8" width="1" height="1" fill="#0b0b0b"/><rect x="21" y="8" width="1" height="1" fill="#0a0a0a"/><rect x="9" y="9" width="1" height="1" fill="#090909"/><rect x="10" y="9" width="1" height="1" fill="#0b0b0b"/><rect x="11" y="9" width="1" height="1" fill="#0d0d0d"/><rect x="12" y="9" width="1" height="1" fill="#111111"/><rect x="13" y="9" width="1" height="1" fill="#141414"/><rect x="14" y="9" width="1" height="1" fill="#181818"/><rect x="15" y="9" width="2" height="1" fill="#1b1b1b"/><rect x="17" y="9" width="1" height="1" fill="#1a1a1a"/><rect x="18" y="9" width="1" height="1" fill="#171717"/><rect x="19" y="9" width="1" height="1" fill="#131313"/><rect x="20" y="9" width="1" height="1" fill="#0f0f0f"/><rect x="21" y="9" width="1" height="1" fill="#0c0c0c"/><rect x="22" y="9" width="1" height="1" fill="#0a0a0a"/><rect x="9" y="10" width="1" height="1" fill="#0a0a0a"/><rect x="10" y="10" width="1" height="1" fill="#0d0d0d"/><rect x="11" y="10" width="1" height="1" fill="#121212"/><rect x="12" y="10" width="1" height="1" fill="#181818"/><rect x="13" y="10" width="1" height="1" fill="#202020"/><rect x="14" y="10" width="1" height="1" fill="#272727"/><rect x="15" y="10" width="1" height="1" fill="#2d2d2d"/><rect x="16" y="10" width="1" height="1" fill="#2e2e2e"/><rect x="17" y="10" width="1" height="1" fill="#2b2b2b"/><rect x="18" y="10" width="1" height="1" fill="#242424"/><rect x="19" y="10" width="1" height="1" fill="#1c1c1c"/><rect x="20" y="10" width="1" height="1" fill="#151515"/><rect x="21" y="10" width="1" height="1" fill="#101010"/><rect x="22" y="10" width="1" height="1" fill="#0c0c0c"/><rect x="23" y="10" width="1" height="1" fill="#0a0a0a"/><rect x="8" y="11" width="1" height="1" fill="#0a0a0a"/><rect x="9" y="11" width="1" height="1" fill="#0d0d0d"/><rect x="10" y="11" width="1" height="1" fill="#111111"/><rect x="11" y="11" width="1" height="1" fill="#191919"/><rect x="12" y="11" width="1" height="1" fill="#242424"/><rect x="13" y="11" width="1" height="1" fill="#333333"/><rect x="14" y="11" width="1" height="1" fill="#414141"/><rect x="15" y="11" width="1" height="1" fill="#4c4c4c"/><rect x="16" y="11" width="1" height="1" fill="#4e4e4e"/><rect x="17" y="11" width="1" height="1" fill="#474747"/><rect x="18" y="11" width="1" height="1" fill="#3b3b3b"/><rect x="19" y="11" width="1" height="1" fill="#2c2c2c"/><rect x="20" y="11" width="1" height="1" fill="#1f1f1f"/><rect x="21" y="11" width="1" height="1" fill="#151515"/><rect x="22" y="11" width="1" height="1" fill="#0f0f0f"/><rect x="23" y="11" width="1" height="1" fill="#0b0b0b"/><rect x="24" y="11" width="1" height="1" fill="#090909"/><rect x="8" y="12" width="1" height="1" fill="#0b0b0b"/><rect x="9" y="12" width="1" height="1" fill="#0f0f0f"/><rect x="10" y="12" width="1" height="1" fill="#161616"/><rect x="11" y="12" width="1" height="1" fill="#222222"/><rect x="12" y="12" width="1" height="1" fill="#353535"/><rect x="13" y="12" width="1" height="1" fill="#4d4d4d"/><rect x="14" y="12" width="1" height="1" fill="#666666"/><rect x="15" y="12" width="1" height="1" fill="#787878"/><rect x="16" y="12" width="1" height="1" fill="#7c7c7c"/><rect x="17" y="12" width="1" height="1" fill="#707070"/><rect x="18" y="12" width="1" height="1" fill="#5a5a5a"/><rect x="19" y="12" width="1" height="1" fill="#414141"/><rect x="20" y="12" width="1" height="1" fill="#2c2c2c"/><rect x="21" y="12" width="1" height="1" fill="#1c1c1c"/><rect x="22" y="12" width="1" height="1" fill="#131313"/><rect x="23" y="12" width="1" height="1" fill="#0d0d0d"/><rect x="24" y="12" width="1" height="1" fill="#0a0a0a"/><rect x="7" y="13" width="1" height="1" fill="#090909"/><rect x="8" y="13" width="1" height="1" fill="#0c0c0c"/><rect x="9" y="13" width="1" height="1" fill="#111111"/><rect x="10" y="13" width="1" height="1" fill="#1b1b1b"/><rect x="11" y="13" width="1" height="1" fill="#2d2d2d"/><rect x="12" y="13" width="1" height="1" fill="#484848"/><rect x="13" y="13" width="1" height="1" fill="#6c6c6c"/><rect x="14" y="13" width="1" height="1" fill="#919191"/><rect x="15" y="13" width="1" height="1" fill="#acacac"/><rect x="16" y="13" width="1" height="1" fill="#b2b2b2"/><rect x="17" y="13" width="1" height="1" fill="#a1a1a1"/><rect x="18" y="13" width="1" height="1" fill="#7f7f7f"/><rect x="19" y="13" width="1" height="1" fill="#5a5a5a"/><rect x="20" y="13" width="1" height="1" fill="#3a3a3a"/><rect x="21" y="13" width="1" height="1" fill="#242424"/><rect x="22" y="13" width="1" height="1" fill="#161616"/><rect x="23" y="13" width="1" height="1" fill="#0f0f0f"/><rect x="24" y="13" width="1" height="1" fill="#0b0b0b"/><rect x="7" y="14" width="1" height="1" fill="#090909"/><rect x="8" y="14" width="1" height="1" fill="#0d0d0d"/><rect x="9" y="14" width="1" height="1" fill="#131313"/><rect x="10" y="14" width="1" height="1" fill="#202020"/><rect x="11" y="14" width="1" height="1" fill="#363636"/><rect x="12" y="14" width="1" height="1" fill="#585858"/><rect x="13" y="14" width="1" height="1" fill="#878787"/><rect x="14" y="14" width="1" height="1" fill="#b9b9b9"/><rect x="15" y="14" width="1" height="1" fill="#e0e0e0"/><rect x="16" y="14" width="1" height="1" fill="#e8e8e8"/><rect x="17" y="14" width="1" height="1" fill="#cdcdcd"/><rect x="18" y="14" width="1" height="1" fill="#9f9f9f"/><rect x="19" y="14" width="1" height="1" fill="#6f6f6f"/><rect x="20" y="14" width="1" height="1" fill="#464646"/><rect x="21" y="14" width="1" height="1" fill="#2a2a2a"/><rect x="22" y="14" width="1" height="1" fill="#191919"/><rect x="23" y="14" width="1" height="1" fill="#101010"/><rect x="24" y="14" width="1" height="1" fill="#0c0c0c"/><rect x="25" y="14" width="1" height="1" fill="#090909"/><rect x="7" y="15" width="1" height="1" fill="#0a0a0a"/><rect x="8" y="15" width="1" height="1" fill="#0d0d0d"/><rect x="9" y="15" width="1" height="1" fill="#141414"/><rect x="10" y="15" width="1" height="1" fill="#222222"/><rect x="11" y="15" width="1" height="1" fill="#3a3a3a"/><rect x="12" y="15" width="1" height="1" fill="#616161"/><rect x="13" y="15" width="1" height="1" fill="#949494"/><rect x="14" y="15" width="1" height="1" fill="#d0d0d0"/><rect x="15" y="15" width="2" height="1" fill="#ffffff"/><rect x="17" y="15" width="1" height="1" fill="#e7e7e7"/><rect x="18" y="15" width="1" height="1" fill="#b0b0b0"/><rect x="19" y="15" width="1" height="1" fill="#7a7a7a"/><rect x="20" y="15" width="1" height="1" fill="#4c4c4c"/><rect x="21" y="15" width="1" height="1" fill="#2d2d2d"/><rect x="22" y="15" width="1" height="1" fill="#1b1b1b"/><rect x="23" y="15" width="1" height="1" fill="#111111"/><rect x="24" y="15" width="1" height="1" fill="#0c0c0c"/><rect x="25" y="15" width="1" height="1" fill="#090909"/><rect x="7" y="16" width="1" height="1" fill="#090909"/><rect x="8" y="16" width="1" height="1" fill="#0d0d0d"/><rect x="9" y="16" width="1" height="1" fill="#141414"/><rect x="10" y="16" width="1" height="1" fill="#212121"/><rect x="11" y="16" width="1" height="1" fill="#383838"/><rect x="12" y="16" width="1" height="1" fill="#5d5d5d"/><rect x="13" y="16" width="1" height="1" fill="#8e8e8e"/><rect x="14" y="16" width="1" height="1" fill="#c8c8c8"/><rect x="15" y="16" width="1" height="1" fill="#fcfcfc"/><rect x="16" y="16" width="1" height="1" fill="#ffffff"/><rect x="17" y="16" width="1" height="1" fill="#dedede"/><rect x="18" y="16" width="1" height="1" fill="#a9a9a9"/><rect x="19" y="16" width="1" height="1" fill="#757575"/><rect x="20" y="16" width="1" height="1" fill="#4a4a4a"/><rect x="21" y="16" width="1" height="1" fill="#2c2c2c"/><rect x="22" y="16" width="1" height="1" fill="#1a1a1a"/><rect x="23" y="16" width="1" height="1" fill="#111111"/><rect x="24" y="16" width="1" height="1" fill="#0c0c0c"/><rect x="25" y="16" width="1" height="1" fill="#090909"/><rect x="7" y="17" width="1" height="1" fill="#090909"/><rect x="8" y="17" width="1" height="1" fill="#0c0c0c"/><rect x="9" y="17" width="1" height="1" fill="#121212"/><rect x="10" y="17" width="1" height="1" fill="#1d1d1d"/><rect x="11" y="17" width="1" height="1" fill="#313131"/><rect x="12" y="17" width="1" height="1" fill="#4f4f4f"/><rect x="13" y="17" width="1" height="1" fill="#777777"/><rect x="14" y="17" width="1" height="1" fill="#a4a4a4"/><rect x="15" y="17" width="1" height="1" fill="#c7c7c7"/><rect x="16" y="17" width="1" height="1" fill="#cecece"/><rect x="17" y="17" width="1" height="1" fill="#b5b5b5"/><rect x="18" y="17" width="1" height="1" fill="#8d8d8d"/><rect x="19" y="17" width="1" height="1" fill="#636363"/><rect x="20" y="17" width="1" height="1" fill="#3f3f3f"/><rect x="21" y="17" width="1" height="1" fill="#262626"/><rect x="22" y="17" width="1" height="1" fill="#181818"/><rect x="23" y="17" width="1" height="1" fill="#0f0f0f"/><rect x="24" y="17" width="1" height="1" fill="#0b0b0b"/><rect x="8" y="18" width="1" height="1" fill="#0b0b0b"/><rect x="9" y="18" width="1" height="1" fill="#101010"/><rect x="10" y="18" width="1" height="1" fill="#181818"/><rect x="11" y="18" width="1" height="1" fill="#262626"/><rect x="12" y="18" width="1" height="1" fill="#3c3c3c"/><rect x="13" y="18" width="1" height="1" fill="#595959"/><rect x="14" y="18" width="1" height="1" fill="#777777"/><rect x="15" y="18" width="1" height="1" fill="#8d8d8d"/><rect x="16" y="18" width="1" height="1" fill="#929292"/><rect x="17" y="18" width="1" height="1" fill="#838383"/><rect x="18" y="18" width="1" height="1" fill="#696969"/><rect x="19" y="18" width="1" height="1" fill="#4b4b4b"/><rect x="20" y="18" width="1" height="1" fill="#313131"/><rect x="21" y="18" width="1" height="1" fill="#1f1f1f"/><rect x="22" y="18" width="1" height="1" fill="#141414"/><rect x="23" y="18" width="1" height="1" fill="#0e0e0e"/><rect x="24" y="18" width="1" height="1" fill="#0a0a0a"/><rect x="8" y="19" width="1" height="1" fill="#0a0a0a"/><rect x="9" y="19" width="1" height="1" fill="#0d0d0d"/><rect x="10" y="19" width="1" height="1" fill="#131313"/><rect x="11" y="19" width="1" height="1" fill="#1c1c1c"/><rect x="12" y="19" width="1" height="1" fill="#2a2a2a"/><rect x="13" y="19" width="1" height="1" fill="#3c3c3c"/><rect x="14" y="19" width="1" height="1" fill="#4e4e4e"/><rect x="15" y="19" width="1" height="1" fill="#5b5b5b"/><rect x="16" y="19" width="1" height="1" fill="#5e5e5e"/><rect x="17" y="19" width="1" height="1" fill="#565656"/><rect x="18" y="19" width="1" height="1" fill="#464646"/><rect x="19" y="19" width="1" height="1" fill="#333333"/><rect x="20" y="19" width="1" height="1" fill="#232323"/><rect x="21" y="19" width="1" height="1" fill="#181818"/><rect x="22" y="19" width="1" height="1" fill="#101010"/><rect x="23" y="19" width="1" height="1" fill="#0c0c0c"/><rect x="24" y="19" width="1" height="1" fill="#090909"/><rect x="8" y="20" width="1" height="1" fill="#090909"/><rect x="9" y="20" width="1" height="1" fill="#0b0b0b"/><rect x="10" y="20" width="1" height="1" fill="#0f0f0f"/><rect x="11" y="20" width="1" height="1" fill="#141414"/><rect x="12" y="20" width="1" height="1" fill="#1c1c1c"/><rect x="13" y="20" width="1" height="1" fill="#262626"/><rect x="14" y="20" width="1" height="1" fill="#303030"/><rect x="15" y="20" width="1" height="1" fill="#373737"/><rect x="16" y="20" width="1" height="1" fill="#393939"/><rect x="17" y="20" width="1" height="1" fill="#343434"/><rect x="18" y="20" width="1" height="1" fill="#2b2b2b"/><rect x="19" y="20" width="1" height="1" fill="#212121"/><rect x="20" y="20" width="1" height="1" fill="#181818"/><rect x="21" y="20" width="1" height="1" fill="#121212"/><rect x="22" y="20" width="1" height="1" fill="#0d0d0d"/><rect x="23" y="20" width="1" height="1" fill="#0a0a0a"/><rect x="9" y="21" width="1" height="1" fill="#090909"/><rect x="10" y="21" width="1" height="1" fill="#0b0b0b"/><rect x="11" y="21" width="1" height="1" fill="#0f0f0f"/><rect x="12" y="21" width="1" height="1" fill="#131313"/><rect x="13" y="21" width="1" height="1" fill="#181818"/><rect x="14" y="21" width="1" height="1" fill="#1d1d1d"/><rect x="15" y="21" width="1" height="1" fill="#202020"/><rect x="16" y="21" width="1" height="1" fill="#212121"/><rect x="17" y="21" width="1" height="1" fill="#1f1f1f"/><rect x="18" y="21" width="1" height="1" fill="#1b1b1b"/><rect x="19" y="21" width="1" height="1" fill="#161616"/><rect x="20" y="21" width="1" height="1" fill="#111111"/><rect x="21" y="21" width="1" height="1" fill="#0d0d0d"/><rect x="22" y="21" width="1" height="1" fill="#0b0b0b"/><rect x="23" y="21" width="1" height="1" fill="#090909"/><rect x="10" y="22" width="1" height="1" fill="#090909"/><rect x="11" y="22" width="1" height="1" fill="#0b0b0b"/><rect x="12" y="22" width="1" height="1" fill="#0d0d0d"/><rect x="13" y="22" width="1" height="1" fill="#101010"/><rect x="14" y="22" width="1" height="1" fill="#121212"/><rect x="15" y="22" width="1" height="1" fill="#131313"/><rect x="16" y="22" width="1" height="1" fill="#141414"/><rect x="17" y="22" width="1" height="1" fill="#131313"/><rect x="18" y="22" width="1" height="1" fill="#111111"/><rect x="19" y="22" width="1" height="1" fill="#0f0f0f"/><rect x="20" y="22" width="1" height="1" fill="#0c0c0c"/><rect x="21" y="22" width="1" height="1" fill="#0a0a0a"/><rect x="22" y="22" width="1" height="1" fill="#090909"/><rect x="11" y="23" width="1" height="1" fill="#090909"/><rect x="12" y="23" width="1" height="1" fill="#0a0a0a"/><rect x="13" y="23" width="1" height="1" fill="#0b0b0b"/><rect x="14" y="23" width="1" height="1" fill="#0c0c0c"/><rect x="15" y="23" width="3" height="1" fill="#0d0d0d"/><rect x="18" y="23" width="1" height="1" fill="#0c0c0c"/><rect x="19" y="23" width="1" height="1" fill="#0b0b0b"/><rect x="20" y="23" width="1" height="1" fill="#090909"/><rect x="14" y="24" width="2" height="1" fill="#090909"/><rect x="16" y="24" width="1" height="1" fill="#0a0a0a"/><rect x="17" y="24" width="2" height="1" fill="#090909"/></svg>
<svg class="psf" width="184" height="184" viewBox="0 0 32 32" preserveAspectRatio="none" shape-rendering="crispEdges" style="left:437.3px;top:383.5px"><rect width="32" height="32" fill="#020202"/><rect x="13" y="9" width="7" height="1" fill="#040404"/><rect x="12" y="10" width="2" height="1" fill="#040404"/><rect x="14" y="10" width="5" height="1" fill="#050505"/><rect x="19" y="10" width="2" height="1" fill="#040404"/><rect x="11" y="11" width="2" height="1" fill="#040404"/><rect x="13" y="11" width="1" height="1" fill="#050505"/><rect x="14" y="11" width="1" height="1" fill="#060606"/><rect x="15" y="11" width="3" height="1" fill="#070707"/><rect x="18" y="11" width="1" height="1" fill="#060606"/><rect x="19" y="11" width="1" height="1" fill="#050505"/><rect x="20" y="11" width="2" height="1" fill="#040404"/><rect x="10" y="12" width="2" height="1" fill="#040404"/><rect x="12" y="12" width="1" height="1" fill="#050505"/><rect x="13" y="12" width="1" height="1" fill="#070707"/><rect x="14" y="12" width="1" height="1" fill="#090909"/><rect x="15" y="12" width="1" height="1" fill="#0d0d0d"/><rect x="16" y="12" width="1" height="1" fill="#0f0f0f"/><rect x="17" y="12" width="1" height="1" fill="#0d0d0d"/><rect x="18" y="12" width="1" height="1" fill="#090909"/><rect x="19" y="12" width="1" height="1" fill="#070707"/><rect x="20" y="12" width="1" height="1" fill="#050505"/><rect x="21" y="12" width="2" height="1" fill="#040404"/><rect x="10" y="13" width="1" height="1" fill="#040404"/><rect x="11" y="13" width="1" height="1" fill="#050505"/><rect x="12" y="13" width="1" height="1" fill="#060606"/><rect x="13" y="13" width="1" height="1" fill="#090909"/><rect x="14" y="13" width="1" height="1" fill="#131313"/><rect x="15" y="13" width="1" height="1" fill="#2c2c2c"/><rect x="16" y="13" width="1" height="1" fill="#3d3d3d"/><rect x="17" y="13" width="1" height="1" fill="#292929"/><rect x="18" y="13" width="1" height="1" fill="#111111"/><rect x="19" y="13" width="1" height="1" fill="#090909"/><rect x="20" y="13" width="1" height="1" fill="#060606"/><rect x="21" y="13" width="1" height="1" fill="#050505"/><rect x="22" y="13" width="1" height="1" fill="#040404"/><rect x="10" y="14" width="1" height="1" fill="#040404"/><rect x="11" y="14" width="1" height="1" fill="#050505"/><rect x="12" y="14" width="1" height="1" fill="#070707"/><rect x="13" y="14" width="1" height="1" fill="#0d0d0d"/><rect x="14" y="14" width="1" height="1" fill="#2b2b2b"/><rect x="15" y="14" width="1" height="1" fill="#808080"/><rect x="16" y="14" width="1" height="1" fill="#bababa"/><rect x="17" y="14" width="1" height="1" fill="#767676"/><rect x="18" y="14" width="1" height="1" fill="#252525"/><rect x="19" y="14" width="1" height="1" fill="#0c0c0c"/><rect x="20" y="14" width="1" height="1" fill="#070707"/><rect x="21" y="14" width="1" height="1" fill="#050505"/><rect x="22" y="14" width="1" height="1" fill="#040404"/><rect x="10" y="15" width="1" height="1" fill="#040404"/><rect x="11" y="15" width="1" height="1" fill="#050505"/><rect x="12" y="15" width="1" height="1" fill="#070707"/><rect x="13" y="15" width="1" height="1" fill="#0f0f0f"/><rect x="14" y="15" width="1" height="1" fill="#393939"/><rect x="15" y="15" width="1" height="1" fill="#b3b3b3"/><rect x="16" y="15" width="1" height="1" fill="#ffffff"/><rect x="17" y="15" width="1" height="1" fill="#a4a4a4"/><rect x="18" y="15" width="1" height="1" fill="#313131"/><rect x="19" y="15" width="1" height="1" fill="#0d0d0d"/><rect x="20" y="15" width="1" height="1" fill="#070707"/><rect x="21" y="15" width="1" height="1" fill="#050505"/><rect x="22" y="15" width="1" height="1" fill="#040404"/><rect x="10" y="16" width="1" height="1" fill="#040404"/><rect x="11" y="16" width="1" height="1" fill="#050505"/><rect x="12" y="16" width="1" height="1" fill="#070707"/><rect x="13" y="16" width="1" height="1" fill="#0c0c0c"/><rect x="14" y="16" width="1" height="1" fill="#252525"/><rect x="15" y="16" width="1" height="1" fill="#6d6d6d"/><rect x="16" y="16" width="1" height="1" fill="#9d9d9d"/><rect x="17" y="16" width="1" height="1" fill="#646464"/><rect x="18" y="16" width="1" height="1" fill="#212121"/><rect x="19" y="16" width="1" height="1" fill="#0b0b0b"/><rect x="20" y="16" width="1" height="1" fill="#070707"/><rect x="21" y="16" width="1" height="1" fill="#050505"/><rect x="22" y="16" width="1" height="1" fill="#040404"/><rect x="10" y="17" width="1" height="1" fill="#040404"/><rect x="11" y="17" width="1" height="1" fill="#050505"/><rect x="12" y="17" width="1" height="1" fill="#060606"/><rect x="13" y="17" width="1" height="1" fill="#090909"/><rect x="14" y="17" width="1" height="1" fill="#101010"/><rect x="15" y="17" width="1" height="1" fill="#222222"/><rect x="16" y="17" width="1" height="1" fill="#2e2e2e"/><rect x="17" y="17" width="1" height="1" fill="#202020"/><rect x="18" y="17" width="1" height="1" fill="#0f0f0f"/><rect x="19" y="17" width="1" height="1" fill="#080808"/><rect x="20" y="17" width="1" height="1" fill="#060606"/><rect x="21" y="17" width="2" height="1" fill="#040404"/><rect x="10" y="18" width="2" height="1" fill="#040404"/><rect x="12" y="18" width="1" height="1" fill="#050505"/><rect x="13" y="18" width="1" height="1" fill="#060606"/><rect x="14" y="18" width="1" height="1" fill="#080808"/><rect x="15" y="18" width="1" height="1" fill="#0b0b0b"/><rect x="16" y="18" width="1" height="1" fill="#0c0c0c"/><rect x="17" y="18" width="1" height="1" fill="#0b0b0b"/><rect x="18" y="18" width="1" height="1" fill="#080808"/><rect x="19" y="18" width="1" height="1" fill="#060606"/><rect x="20" y="18" width="1" height="1" fill="#050505"/><rect x="21" y="18" width="1" height="1" fill="#040404"/><rect x="11" y="19" width="2" height="1" fill="#040404"/><rect x="13" y="19" width="1" height="1" fill="#050505"/><rect x="14" y="19" width="1" height="1" fill="#060606"/><rect x="15" y="19" width="3" height="1" fill="#070707"/><rect x="18" y="19" width="1" height="1" fill="#060606"/><rect x="19" y="19" width="1" height="1" fill="#050505"/><rect x="20" y="19" width="2" height="1" fill="#040404"/><rect x="12" y="20" width="3" height="1" fill="#040404"/><rect x="15" y="20" width="3" height="1" fill="#050505"/><rect x="18" y="20" width="3" height="1" fill="#040404"/><rect x="14" y="21" width="5" height="1" fill="#040404"/></svg>
<span class="t b c" style="left:0px;top:621px;left:240.3px;width:189px">Plane 1 (XY)</span>
<span class="t b c" style="left:0px;top:621px;left:435.6px;width:187.6px">Plane 2 (XY)</span>
<svg class="grip" width="10" height="10" viewBox="0 0 10 10"><g fill="#6a6a6d"><rect x="8" y="0" width="1.4" height="1.4"/><rect x="5.5" y="2.6" width="1.4" height="1.4"/><rect x="8" y="2.6" width="1.4" height="1.4"/><rect x="3" y="5.2" width="1.4" height="1.4"/><rect x="5.5" y="5.2" width="1.4" height="1.4"/><rect x="8" y="5.2" width="1.4" height="1.4"/><rect x="0.5" y="7.8" width="1.4" height="1.4"/><rect x="3" y="7.8" width="1.4" height="1.4"/><rect x="5.5" y="7.8" width="1.4" height="1.4"/><rect x="8" y="7.8" width="1.4" height="1.4"/></g></svg>
</div>
</body></html>
